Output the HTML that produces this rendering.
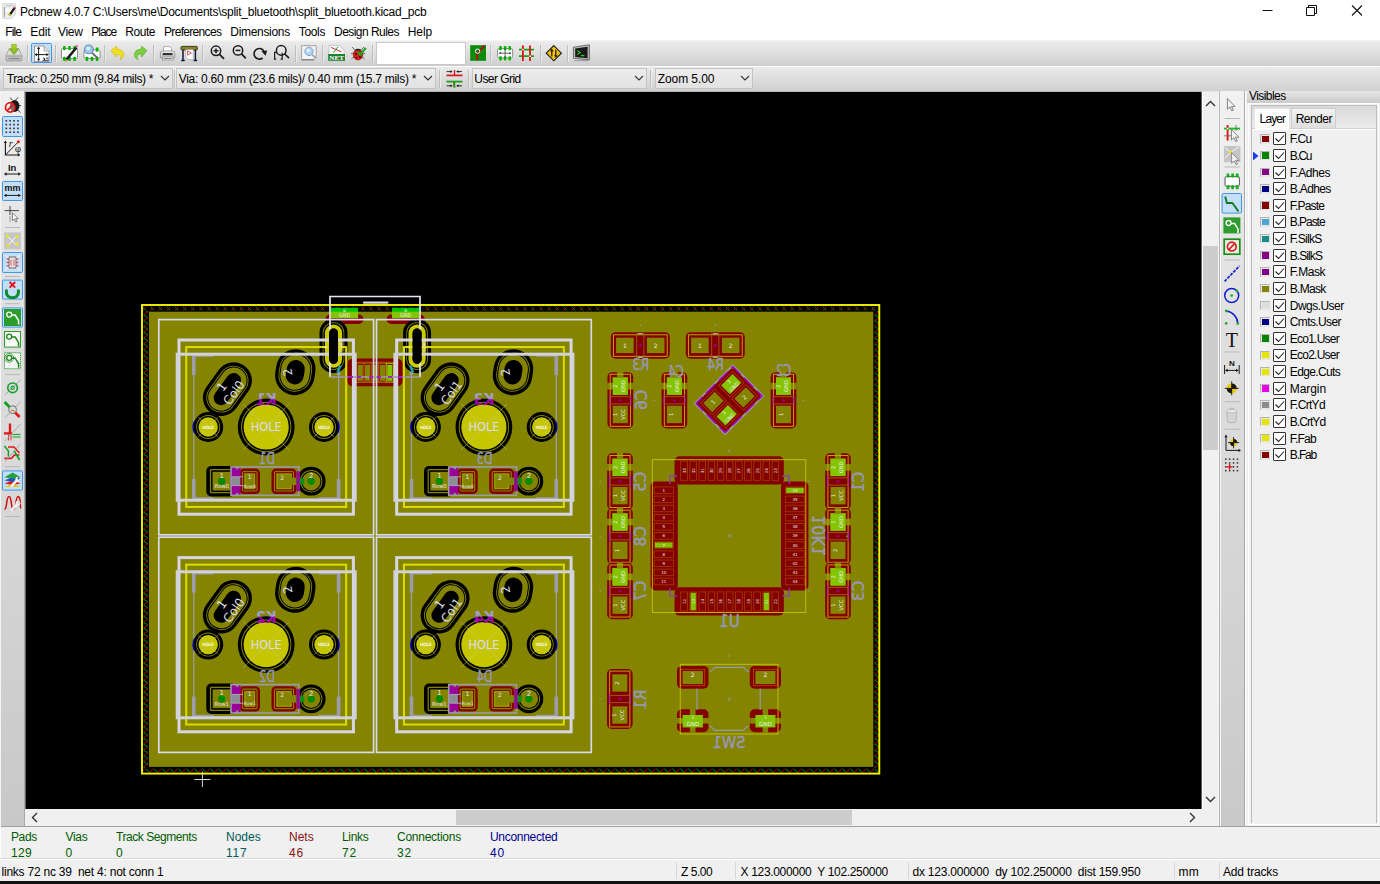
<!DOCTYPE html>
<html><head><meta charset="utf-8"><title>Pcbnew</title>
<style>
html,body{margin:0;padding:0;}
body{width:1380px;height:884px;overflow:hidden;position:relative;background:#f0f0f0;font-family:"Liberation Sans",sans-serif;font-size:12px;color:#000;}
.a{position:absolute;}
.t{position:absolute;white-space:nowrap;line-height:1;}

.tb1{left:0;top:40px;width:1380px;height:26px;background:linear-gradient(#f8f8f8 0,#eaeaea 8%,#e2e2e2 40%,#cecece 100%);}
.tb2{left:0;top:67px;width:1380px;height:24px;background:linear-gradient(#ebebeb,#e2e2e2 30%,#d0d0d0);}
.sep{position:absolute;width:1px;background:#bebebe;box-shadow:1px 0 0 #ececec}
.combo{position:absolute;height:21px;top:68px;border:1px solid #c3c3c3;background:linear-gradient(#ececec,#e2e2e2);box-sizing:border-box;}
.ltb{left:0;top:91px;width:25px;height:735px;background:linear-gradient(#f0f0f0,#e2e2e2 25%,#c8c8c8);border-right:1px solid #a9a9a9;border-left:1px solid #f4f4f4;box-sizing:border-box;width:25px}
.rtb{left:1221px;top:91px;width:23px;height:735px;background:linear-gradient(#f2f2f2,#e2e2e2 25%,#c9c9c9);border-right:1px solid #a9a9a9;}
.sw{position:absolute;width:10.4px;height:9.4px;border:1px solid #b4b4b4;border-right-color:#dcdcdc;border-bottom-color:#e6e6e6;box-sizing:border-box;background:#e8e8e8}
.sw i{position:absolute;left:0.6px;top:0.5px;width:7.4px;height:6.4px;display:block}
.cb{position:absolute;width:13px;height:13px;border:1px solid #333;background:#fff;box-sizing:border-box;border-radius:1px}

</style></head><body>
<div class="a" style="left:0;top:0;width:1380px;height:40px;background:#fff"></div>
<div class="t" id="t1" style="left:20px;top:5.64px;font-size:12px;color:#000;letter-spacing:-0.252px;">Pcbnew 4.0.7 C:\Users\me\Documents\split_bluetooth\split_bluetooth.kicad_pcb</div>
<svg class="a" style="left:0;top:0" width="20" height="22" viewBox="0 0 20 22" fill="none"><path d="M2.6 3.6h13v10.6l-4.4 4.4H2.6z" fill="#ececec" stroke="#d2d2d2" stroke-width="0.8"/><path d="M4.4 7v10" stroke="#9a9a9a" stroke-width="1"/><path d="M5.4 5.6h8.4" stroke="#cfcfcf" stroke-width="1.6"/><path d="M5.6 8.8h6v3h-6z" fill="#fdfdfd"/><path d="M9.4 15.4L14.8 7.6" stroke="#1c1c1c" stroke-width="2.3"/><path d="M14.4 8.2l1-1.4" stroke="#e87080" stroke-width="2.3"/><path d="M9.1 15.8l1.2-1.7" stroke="#e0d820" stroke-width="2.2"/></svg>
<svg class="a" style="left:1250px;top:0" width="130" height="22" viewBox="1250 0 130 22"><path d="M1262.5 10.5h10" stroke="#111" stroke-width="1" fill="none"/><path d="M1306.5 7.5h8v8h-8z M1308.5 7.5v-2h8v8h-2" stroke="#111" stroke-width="1" fill="none"/><path d="M1352 5.5l10 10 M1362 5.5l-10 10" stroke="#111" stroke-width="1.1" fill="none"/></svg>
<div class="t" id="t2" style="left:5.3px;top:26.34px;font-size:12px;color:#000;letter-spacing:-0.915px;">File</div>
<div class="t" id="t3" style="left:30.3px;top:26.34px;font-size:12px;color:#000;letter-spacing:-0.163px;">Edit</div>
<div class="t" id="t4" style="left:58px;top:26.34px;font-size:12px;color:#000;letter-spacing:-0.299px;">View</div>
<div class="t" id="t5" style="left:91.3px;top:26.34px;font-size:12px;color:#000;letter-spacing:-1.033px;">Place</div>
<div class="t" id="t6" style="left:125.3px;top:26.34px;font-size:12px;color:#000;letter-spacing:-0.458px;">Route</div>
<div class="t" id="t7" style="left:164px;top:26.34px;font-size:12px;color:#000;letter-spacing:-0.680px;">Preferences</div>
<div class="t" id="t8" style="left:230.3px;top:26.34px;font-size:12px;color:#000;letter-spacing:-0.311px;">Dimensions</div>
<div class="t" id="t9" style="left:298.7px;top:26.34px;font-size:12px;color:#000;letter-spacing:-0.304px;">Tools</div>
<div class="t" id="t10" style="left:334px;top:26.34px;font-size:12px;color:#000;letter-spacing:-0.534px;">Design Rules</div>
<div class="t" id="t11" style="left:407.7px;top:26.34px;font-size:12px;color:#000;letter-spacing:-0.062px;">Help</div>
<div class="a tb1"></div><div class="a" style="left:0;top:66px;width:1380px;height:1px;background:#fafafa"></div><div class="a tb2"></div>
<div class="a" style="left:0;top:91px;width:1380px;height:1px;background:#e4e4e4"></div>
<div class="sep" style="left:27px;top:45px;height:17px"></div>
<div class="sep" style="left:55px;top:45px;height:17px"></div>
<div class="sep" style="left:104px;top:45px;height:17px"></div>
<div class="sep" style="left:153px;top:45px;height:17px"></div>
<div class="sep" style="left:202px;top:45px;height:17px"></div>
<div class="sep" style="left:295px;top:45px;height:17px"></div>
<div class="sep" style="left:322px;top:45px;height:17px"></div>
<div class="sep" style="left:372px;top:45px;height:17px"></div>
<div class="sep" style="left:490px;top:45px;height:17px"></div>
<div class="sep" style="left:540px;top:45px;height:17px"></div>
<div class="sep" style="left:567px;top:45px;height:17px"></div>
<div class="a" style="left:376px;top:42px;width:90px;height:23px;background:#fff;border:1px solid #c9c9c9;box-sizing:border-box"></div>
<div class="combo" style="left:3px;width:170px"></div>
<div class="t" id="t12" style="left:6.7px;top:73.04px;font-size:12px;color:#000;letter-spacing:-0.366px;">Track: 0.250 mm (9.84 mils) *</div>
<svg class="a" style="left:159.5px;top:74px" width="10" height="8" viewBox="0 0 10 8"><path d="M1 2l4 4 4-4" stroke="#333" stroke-width="1.1" fill="none"/></svg>
<div class="combo" style="left:176px;width:260px"></div>
<div class="t" id="t13" style="left:178.7px;top:73.04px;font-size:12px;color:#000;letter-spacing:-0.279px;">Via: 0.60 mm (23.6 mils)/ 0.40 mm (15.7 mils) *</div>
<svg class="a" style="left:422.5px;top:74px" width="10" height="8" viewBox="0 0 10 8"><path d="M1 2l4 4 4-4" stroke="#333" stroke-width="1.1" fill="none"/></svg>
<div class="combo" style="left:472px;width:175px"></div>
<div class="t" id="t14" style="left:474.3px;top:73.04px;font-size:12px;color:#000;letter-spacing:-0.555px;">User Grid</div>
<svg class="a" style="left:633.5px;top:74px" width="10" height="8" viewBox="0 0 10 8"><path d="M1 2l4 4 4-4" stroke="#333" stroke-width="1.1" fill="none"/></svg>
<div class="combo" style="left:655px;width:98px"></div>
<div class="t" id="t15" style="left:657.7px;top:73.04px;font-size:12px;color:#000;letter-spacing:-0.072px;">Zoom 5.00</div>
<svg class="a" style="left:739.5px;top:74px" width="10" height="8" viewBox="0 0 10 8"><path d="M1 2l4 4 4-4" stroke="#333" stroke-width="1.1" fill="none"/></svg>
<div class="sep" style="left:174px;top:70px;height:18px;background:#c4c4c4"></div>
<div class="sep" style="left:439px;top:70px;height:18px"></div>
<div class="sep" style="left:468px;top:70px;height:18px"></div>
<div class="sep" style="left:650px;top:70px;height:18px"></div>
<div class="a ltb"></div>
<div class="a" style="left:1218px;top:91px;width:3px;height:735px;background:#f6f6f6"></div><div class="a" style="left:1219px;top:91px;width:1px;height:735px;background:#b4b4b4"></div>
<div class="a rtb"></div>
<svg class="a" style="left:0;top:40px" width="600" height="52" viewBox="0 40 600 52" fill="none"><defs><linearGradient id="gy" x1="0" y1="0" x2="0" y2="1"><stop offset="0" stop-color="#b8d820"/><stop offset="1" stop-color="#70b020"/></linearGradient><linearGradient id="gg" x1="0" y1="0" x2="0" y2="1"><stop offset="0" stop-color="#f4f4f4"/><stop offset="1" stop-color="#b4b4b4"/></linearGradient></defs><path d="M6 55.5L9.5 48.5h9L22 55.5V60a1 1 0 0 1-1 1H7a1 1 0 0 1-1-1z" fill="url(#gg)" stroke="#9a9a9a" stroke-width="0.8"/><path d="M6.5 56h15" stroke="#888" stroke-width="0.8"/><path d="M8.5 58.5h11" stroke="#8c8c8c" stroke-width="1.4"/><path d="M11.7 44.5h4.6v4.6h2.8L14 54.6 8.9 49.1h2.8z" fill="url(#gy)" stroke="#7da020" stroke-width="0.6"/><rect x="31.5" y="43.5" width="20" height="19" rx="1" fill="#c4def6" stroke="#3f97e6"/><path d="M34.5 46h9.5l5 5v10.5h-14.5z" fill="#fff" stroke="#8a8a8a" stroke-width="0.8"/><path d="M44 46v5h5" fill="#e4e4e4" stroke="#8a8a8a" stroke-width="0.7"/><path d="M38.6 47.5v13M35.5 54.6h12.5" stroke="#1a1a1a" stroke-width="1"/><path d="M38.6 46.6l-1.6 2.4h3.2zM38.6 61.2l-1.6-2.4h3.2zM34.6 54.6l2.4-1.6v3.2zM48.8 54.6l-2.4-1.6v3.2z" fill="#1a1a1a"/><path d="M42.5 60.3h6.2M43 58.2h1.5v2M46 58.2h2.4" stroke="#1a1a1a" stroke-width="0.9"/><rect x="61.5" y="48.5" width="16" height="10" rx="1.5" fill="#fff" stroke="#777" stroke-width="0.8"/><rect x="63.1" y="46" width="2.6" height="4.2" rx="0.8" fill="#00b400"/><rect x="63.1" y="56.8" width="2.6" height="4.2" rx="0.8" fill="#00b400"/><rect x="68.2" y="46" width="2.6" height="4.2" rx="0.8" fill="#00b400"/><rect x="68.2" y="56.8" width="2.6" height="4.2" rx="0.8" fill="#00b400"/><rect x="73.3" y="46" width="2.6" height="4.2" rx="0.8" fill="#00b400"/><rect x="73.3" y="56.8" width="2.6" height="4.2" rx="0.8" fill="#00b400"/><path d="M66.5 59.5L76.5 47.5" stroke="#1a1a1a" stroke-width="2.6"/><path d="M76 47l1.4-1.6" stroke="#e07090" stroke-width="2.4"/><path d="M65.2 61.2l1.8-0.6-1.2-1.2z" fill="#e8c060" stroke="#c09030" stroke-width="0.8"/><rect x="84" y="50.0" width="16" height="8.5" rx="1.5" fill="#fff" stroke="#777" stroke-width="0.8"/><rect x="85.6" y="47.5" width="2.6" height="4.2" rx="0.8" fill="#00b400"/><rect x="85.6" y="56.8" width="2.6" height="4.2" rx="0.8" fill="#00b400"/><rect x="90.7" y="47.5" width="2.6" height="4.2" rx="0.8" fill="#00b400"/><rect x="90.7" y="56.8" width="2.6" height="4.2" rx="0.8" fill="#00b400"/><rect x="95.8" y="47.5" width="2.6" height="4.2" rx="0.8" fill="#00b400"/><rect x="95.8" y="56.8" width="2.6" height="4.2" rx="0.8" fill="#00b400"/><circle cx="88.8" cy="49.4" r="4.4" fill="#9cc8ee" stroke="#6c8cb0" stroke-width="1.1"/><circle cx="88.2" cy="48.6" r="2" fill="#d4e8fa"/><path d="M92 52.8L97.6 58" stroke="#666" stroke-width="1.8"/><path d="M111 50.6l5.4-4.4v2.9c4.6 0 7.2 2.4 7.2 5.6 0 2.4-1.6 4.2-3.6 5.2 1.1-1.6 1.2-3.2 0.2-4.4-0.8-1-2.2-1.4-3.8-1.4v2.9z" fill="#f2e020" stroke="#c8b400" stroke-width="0.6"/><path d="M147 50.6l-5.4-4.4v2.9c-4.6 0-7.2 2.4-7.2 5.6 0 2.4 1.6 4.2 3.6 5.2-1.1-1.6-1.2-3.2-0.2-4.4 0.8-1 2.2-1.4 3.8-1.4v2.9z" fill="#7cd040" stroke="#58a828" stroke-width="0.6"/><path d="M163.5 52v-5.4h6l2 2V52" fill="#fff" stroke="#9a9a9a" stroke-width="0.8"/><rect x="160.4" y="51" width="14.4" height="7.6" rx="2" fill="url(#gg)" stroke="#8c8c8c" stroke-width="0.8"/><rect x="162.6" y="53" width="10" height="2.2" fill="#333"/><rect x="162.4" y="57" width="10.6" height="3" fill="#f4f4f4" stroke="#8c8c8c" stroke-width="0.7"/><path d="M163.6 58.6h8" stroke="#555" stroke-width="0.8"/><rect x="181" y="46.4" width="16.4" height="3.6" rx="1" fill="#8c8420" stroke="#2a2a18" stroke-width="0.9"/><path d="M183 50v10.4M195.4 50v10.4M181.2 60.6h3.6M193.6 60.6h3.6" stroke="#101840" stroke-width="1.5"/><path d="M185.6 49.4h7.6v10.2h-5l-2.6-2.6z" fill="#fff" stroke="#9a9a9a" stroke-width="0.6"/><path d="M187.6 50.8v4.4l3.8-2.2z" fill="none" stroke="#d03040" stroke-width="0.8"/><circle cx="216" cy="50.8" r="4.7" fill="none" stroke="#1a1a1a" stroke-width="1.5"/><path d="M219.29 54.089999999999996L224 58.8" stroke="#1a1a1a" stroke-width="1.7"/><path d="M213.6 50.8h4.8M216 48.4v4.8" stroke="#1a1a1a" stroke-width="1.5"/><circle cx="238" cy="50.4" r="4.7" fill="none" stroke="#1a1a1a" stroke-width="1.5"/><path d="M241.29 53.69L245.8 58.4" stroke="#1a1a1a" stroke-width="1.7"/><path d="M235.6 50.4h4.8" stroke="#1a1a1a" stroke-width="1.5"/><path d="M264.2 51.6a5.3 5.3 0 1 0 -1.6 6.4" stroke="#1a1a1a" stroke-width="1.6"/><path d="M261.4 51.2l5.8-0.8-1.6 5.4z" fill="#1a1a1a"/><circle cx="281.2" cy="50.4" r="4.8" fill="none" stroke="#1a1a1a" stroke-width="1.5"/><path d="M284.56 53.76L289 58.2" stroke="#1a1a1a" stroke-width="1.7"/><path d="M276.2 52.4h-1.6v6.8h1.6M280.6 59.2h1.6v-6.4" stroke="#1a1a1a" stroke-width="1.2"/><path d="M301.6 45.6h14.6v11.6l-2.6 3h-12z" fill="#f4f4f4" stroke="#9c9c9c" stroke-width="0.9"/><path d="M302 59.6h12" stroke="#7a7a7a" stroke-width="1"/><circle cx="309" cy="51.4" r="4.2" fill="#a8d0f2" stroke="#88a8cc" stroke-width="1"/><circle cx="308.2" cy="50.4" r="2" fill="#e0f0fc"/><path d="M312.2 54.6l4 3.8" stroke="#a0a0a0" stroke-width="1.6"/><path d="M329 45.4h10.4l4.6 4.6v8h-15z" fill="#fbfbfb" stroke="#b4b4b4" stroke-width="0.7"/><path d="M331 47.4l10.4 4.4" stroke="#d03030" stroke-width="1"/><path d="M338 46.8l-4.6 6" stroke="#20a020" stroke-width="1"/><rect x="328.2" y="54" width="16.8" height="6.8" fill="#208030"/><text x="336.6" y="60" font-size="6.6" font-weight="bold" fill="#fff" text-anchor="middle" font-family="Liberation Serif, serif" textLength="14.5" lengthAdjust="spacingAndGlyphs">NET</text><path d="M352 47l3 3M364 47l-3 3M351.4 59l3-2.4M364.6 59l-3-2.4M351 53.6h3M365 53.6h-3" stroke="#555" stroke-width="0.8"/><ellipse cx="358" cy="54.6" rx="4.8" ry="5.4" fill="#e01818" stroke="#801010" stroke-width="0.6"/><path d="M354.6 50.4a3.6 2.6 0 0 1 6.8 0z" fill="#222"/><circle cx="356" cy="54" r="0.9" fill="#200"/><circle cx="360" cy="57" r="0.9" fill="#200"/><circle cx="356.4" cy="57.6" r="0.8" fill="#200"/><path d="M357.4 51.6l2.8 3.2 5.6-7" stroke="#10a820" stroke-width="2.1"/><rect x="470.2" y="45.2" width="15.8" height="15.6" fill="#0a8c0a"/><path d="M477.2 60v-6.4l7.4-8" stroke="#a01818" stroke-width="2.2"/><circle cx="477.6" cy="51.2" r="2.2" stroke="#f0f0f0" stroke-width="1"/><rect x="497.6" y="48.5" width="15" height="9.4" rx="1.5" fill="#fff" stroke="#777" stroke-width="0.8"/><rect x="499.2" y="46" width="2.6" height="4.2" rx="0.8" fill="#00b400"/><rect x="499.2" y="56.199999999999996" width="2.6" height="4.2" rx="0.8" fill="#00b400"/><rect x="503.8" y="46" width="2.6" height="4.2" rx="0.8" fill="#00b400"/><rect x="503.8" y="56.199999999999996" width="2.6" height="4.2" rx="0.8" fill="#00b400"/><rect x="508.4" y="46" width="2.6" height="4.2" rx="0.8" fill="#00b400"/><rect x="508.4" y="56.199999999999996" width="2.6" height="4.2" rx="0.8" fill="#00b400"/><path d="M499.6 53.2h11M505.1 48.6v9.4" stroke="#444" stroke-width="0.8"/><path d="M498.8 53.2l2-1.4v2.8zM511.4 53.2l-2-1.4v2.8z" fill="#444"/><path d="M519 49.6h15M519 56.2h15" stroke="#18a018" stroke-width="1.8"/><path d="M522.9 45.6v15.4M530 45.6v15.4" stroke="#e01010" stroke-width="1.8"/><circle cx="522.9" cy="49.6" r="0.9" fill="#fff"/><circle cx="530" cy="56.2" r="0.9" fill="#fff"/><path d="M553.8 45.6l7.6 7.6-7.6 7.6-7.6-7.6z" fill="#f4c010" stroke="#1a1a1a" stroke-width="1.1"/><path d="M551.8 56.6v-6M555.8 49.8v6" stroke="#1a1a1a" stroke-width="1.2"/><path d="M551.8 48.6l-1.8 2.6h3.6zM555.8 57.8l-1.8-2.6h3.6z" fill="#1a1a1a"/><path d="M573.4 47.2l16-2.4v15l-16-1.6z" fill="#bdbdbd" stroke="#555" stroke-width="0.8"/><path d="M575.2 48.6l12.4-1.8v11.4l-12.4-1.2z" fill="#181818"/><path d="M577.2 50.6l3 2-3 2M581 55.6h3.4" stroke="#20e020" stroke-width="1.1"/><path d="M574.4 60.6h14" stroke="#999" stroke-width="1"/><path d="M446.5 75.4h16" stroke="#d82020" stroke-width="1.8"/><path d="M446.5 81.6h16" stroke="#18a018" stroke-width="1.8"/><path d="M454.5 70v5M454 82v5" stroke="#d82020" stroke-width="1.4"/><path d="M454.4 87.8v-5.6" stroke="#18a018" stroke-width="1.8"/><path d="M446.6 71.6h5M457 71.6h5M446.6 85.8h5M457 85.8h5" stroke="#1a1a1a" stroke-width="0.9"/><path d="M452.6 71.6l-2.2-1.4v2.8zM456.2 71.6l2.2-1.4v2.8zM452.6 85.8l-2.2-1.4v2.8zM456.2 85.8l2.2-1.4v2.8z" fill="#1a1a1a"/></svg>
<svg class="a" style="left:0;top:92px" width="25" height="440" viewBox="0 92 25 440" fill="none"><g transform="translate(0.6 1.6)"><path d="M15 98.4l2.6-2.6M11.6 98.4l-2-2.4M18 104h2.4M17.4 108.6l2.4 2.4" stroke="#222" stroke-width="0.9"/><ellipse cx="14" cy="104.4" rx="4.8" ry="6" fill="#181818"/><circle cx="9.6" cy="105.8" r="4.7" stroke="#e01818" stroke-width="1.7" fill="#f0e0e0" fill-opacity="0.45"/><path d="M6.4 109.2l6.6-6.8" stroke="#e01818" stroke-width="1.7"/></g><rect x="2.5" y="116.5" width="20" height="20" rx="1" fill="#c4def6" stroke="#3f97e6"/><rect x="5.5" y="120.0" width="1.6" height="1.6" fill="#303030"/><rect x="5.5" y="123.8" width="1.6" height="1.6" fill="#303030"/><rect x="5.5" y="127.6" width="1.6" height="1.6" fill="#303030"/><rect x="5.5" y="131.4" width="1.6" height="1.6" fill="#303030"/><rect x="9.4" y="120.0" width="1.6" height="1.6" fill="#303030"/><rect x="9.4" y="123.8" width="1.6" height="1.6" fill="#303030"/><rect x="9.4" y="127.6" width="1.6" height="1.6" fill="#303030"/><rect x="9.4" y="131.4" width="1.6" height="1.6" fill="#303030"/><rect x="13.2" y="120.0" width="1.6" height="1.6" fill="#303030"/><rect x="13.2" y="123.8" width="1.6" height="1.6" fill="#303030"/><rect x="13.2" y="127.6" width="1.6" height="1.6" fill="#303030"/><rect x="13.2" y="131.4" width="1.6" height="1.6" fill="#303030"/><rect x="17.1" y="120.0" width="1.6" height="1.6" fill="#303030"/><rect x="17.1" y="123.8" width="1.6" height="1.6" fill="#303030"/><rect x="17.1" y="127.6" width="1.6" height="1.6" fill="#303030"/><rect x="17.1" y="131.4" width="1.6" height="1.6" fill="#303030"/><path d="M5.4 141.5v13.5h14" stroke="#1a1a1a" stroke-width="1.1"/><path d="M5.4 140.4l-1.6 2.6h3.2zM20.4 155l-2.6-1.6v3.2z" fill="#1a1a1a"/><path d="M5.4 155L17.6 142.6" stroke="#1a1a1a" stroke-width="1"/><circle cx="18.4" cy="141.8" r="1.5" fill="#e01010"/><text x="10.6" y="147" font-size="10" font-style="italic" fill="#111" text-anchor="middle" font-family="Liberation Serif, serif">r</text><text x="18" y="152.4" font-size="8.5" fill="#111" text-anchor="middle" font-family="DejaVu Serif, serif">φ</text><text x="12.2" y="171" font-size="9.5" font-weight="bold" fill="#111" text-anchor="middle" font-family="Liberation Sans, sans-serif">In</text><path d="M5.6 174h13.6" stroke="#1a1a1a" stroke-width="1"/><path d="M3.8 174l2.8-1.7v3.4zM21 174l-2.8-1.7v3.4z" fill="#1a1a1a"/><rect x="2.5" y="181.5" width="20" height="19" rx="1" fill="#c4def6" stroke="#3f97e6"/><text x="12.4" y="190.6" font-size="9.5" font-weight="bold" fill="#111" text-anchor="middle" font-family="Liberation Sans, sans-serif" textLength="16" lengthAdjust="spacingAndGlyphs">mm</text><path d="M5.6 195.4h13.6" stroke="#1a1a1a" stroke-width="1"/><path d="M3.8 195.4l2.8-1.7v3.4zM21 195.4l-2.8-1.7v3.4z" fill="#1a1a1a"/><path d="M10 206v9M4.6 210.6h14.4" stroke="#333" stroke-width="0.9"/><path d="M10 216v6" stroke="#888" stroke-width="0.8"/><path d="M12.4 212.6v8l2-1.6 1.4 3 1.2-0.6-1.4-2.8h2.6z" fill="#fff" stroke="#555" stroke-width="0.7"/><path d="M5 227.5h15M5 276.5h15M5 303.7h15M5 374.6h15M5 466.7h15M5 516.5h15" stroke="#b8b8b8" stroke-width="1"/><rect x="4" y="232.4" width="17" height="17" fill="#c6c6c6"/><path d="M7.4 236l9.6 9.6M16.6 236l-9 10" stroke="#fff" stroke-width="0.9"/><circle cx="7.4" cy="236" r="1.5" fill="#e8e800"/><circle cx="16.8" cy="236.4" r="1.5" fill="#e8e800"/><circle cx="7.8" cy="245.6" r="1.5" fill="#e8e800"/><circle cx="17" cy="244" r="1.5" fill="#e8e800"/><rect x="2.5" y="252.5" width="20" height="20" rx="1" fill="#c4def6" stroke="#3f97e6"/><rect x="9" y="257" width="7" height="11" fill="#f0e0e0" stroke="#555" stroke-width="0.8"/><path d="M6.6 259h2.4M6.6 262.4h2.4M6.6 265.8h2.4M16 259h2.4M16 262.4h2.4M16 265.8h2.4" stroke="#d03030" stroke-width="1"/><path d="M5 255.4l3.6 2M20 255.4l-3.6 2M5 269.8l3.6-2M20 269.8l-3.6-2" stroke="#fff" stroke-width="0.8"/><path d="M11 259.6v6M14 259.6v6" stroke="#c04040" stroke-width="0.8"/><rect x="2.5" y="280.1" width="20" height="19.0" rx="1" fill="#c4def6" stroke="#3f97e6"/><path d="M6.4 289.4v3.4a6 5 0 0 0 12 0v-3.4" stroke="#0c8c2c" stroke-width="3"/><path d="M9.6 282l5.6 5.6M15.2 282l-5.6 5.6" stroke="#e01010" stroke-width="1.8"/><rect x="2.5" y="307.9" width="20" height="19.200000000000045" rx="1" fill="#c4def6" stroke="#3f97e6"/><rect x="4" y="309" width="17" height="17" fill="#2c9c2c"/><circle cx="9.2" cy="314.6" r="2.5" stroke="#fff" stroke-width="1.3" fill="none"/><path d="M11.6 315h3.6l3.4 5.6v4" stroke="#fff" stroke-width="1.5" fill="none"/><rect x="4.5" y="331.5" width="16" height="15.600000000000001" fill="#f8f8f8" stroke="#2c9c2c"/><circle cx="9.2" cy="336.6" r="2.5" stroke="#188818" stroke-width="1.3" fill="none"/><path d="M11.6 337h3.6l3.4 5.6v4" stroke="#188818" stroke-width="1.5" fill="none"/><rect x="4.5" y="352.7" width="16" height="16" fill="#f4f4f4" stroke="#2c9c2c" stroke-dasharray="1.2 0.8"/><circle cx="9.2" cy="357.8" r="2.5" stroke="#188818" stroke-width="1.3" fill="none"/><path d="M11.6 358.2h3.6l3.4 5.6v4" stroke="#188818" stroke-width="1.5" fill="none"/><circle cx="9.2" cy="357.8" r="4.4" stroke="#188818" stroke-width="0.8" fill="none"/><path d="M4.6 395l16-15" stroke="#9a9a9a" stroke-width="0.9"/><circle cx="12.6" cy="387.8" r="4.8" stroke="#18a030" stroke-width="1.7"/><circle cx="12.6" cy="387.8" r="1.7" stroke="#18a030" stroke-width="1.1"/><path d="M4.6 402l5.4 5.4" stroke="#10a020" stroke-width="2.8"/><path d="M14.6 412l5 5" stroke="#e01818" stroke-width="2.8"/><path d="M5 417.6l15.6-16" stroke="#9a9a9a" stroke-width="0.8"/><circle cx="12.6" cy="409.6" r="3.9" fill="#d8d8d8" stroke="#666" stroke-width="0.9"/><path d="M11 410.6h3.4" stroke="#c08020" stroke-width="1.2"/><path d="M10 423.6v10M4 433.4h8" stroke="#e01818" stroke-width="2.4"/><path d="M12.6 434.4h8M12.6 437h8" stroke="#10a020" stroke-width="1"/><path d="M8.6 434.4v6M11 434.4v6" stroke="#e01818" stroke-width="0.9"/><path d="M5 441l15.6-17" stroke="#9a9a9a" stroke-width="0.8"/><path d="M4.4 446l4 5v5.6" stroke="#10a020" stroke-width="1.5"/><path d="M8 447h6l5.4 6" stroke="#e01818" stroke-width="1.5"/><path d="M4.4 458.4h7l3-3.4h5" stroke="#e01818" stroke-width="1.6"/><path d="M14 450.6l5.6 9.4" stroke="#10a020" stroke-width="1.7"/><path d="M5 461.6l15-17" stroke="#9a9a9a" stroke-width="0.8"/><rect x="2.5" y="470.9" width="20" height="19.200000000000045" rx="1" fill="#c4def6" stroke="#3f97e6"/><path d="M4.4 487l8.2-3.4 8.2 3.4z" fill="#e8c800"/><path d="M4.4 483.6l8.2-3.4 8.2 3.4-8.2 1.4z" fill="#d82020"/><path d="M4.4 480.4l8.2-3.4 8.2 3.4-8.2 1.4z" fill="#2050c8"/><path d="M4.4 477.2l8.2-4.6 8.2 4.6-8.2 1.6z" fill="#20a040"/><path d="M11 486.6l6-6.4" stroke="#f4f4f4" stroke-width="2.6"/><circle cx="17.8" cy="479.2" r="2.4" fill="#f4f4f4"/><circle cx="18.6" cy="478.4" r="1.1" fill="#2050c8"/><path d="M4.4 509.4c3 0 1.6-13 4.6-13s1.6 13 4.6 13 1.6-13 4.6-13 1.4 9 2.6 12" stroke="#d01010" stroke-width="1.5"/><path d="M11.4 510.4l6-6.4" stroke="#f4f4f4" stroke-width="2.6"/><circle cx="18" cy="503.2" r="2.4" fill="#f4f4f4"/><circle cx="18.8" cy="502.4" r="1.1" fill="#c8c8c8"/></svg>
<svg class="a" style="left:1221px;top:92px" width="23" height="400" viewBox="1221 92 23 400" fill="none"><path d="M1227.4 98.6v10.6l2.6-2.2 1.8 3.8 1.5-0.7-1.8-3.7h3.4z" fill="#f4f4f4" stroke="#666" stroke-width="0.8"/><path d="M1224.6 118.5h15M1224.6 167h15M1224.6 260h15M1224.6 352h15M1224.6 401.7h15M1224.6 429.3h15" stroke="#b8b8b8" stroke-width="1"/><path d="M1227.6 125v15.6" stroke="#e81010" stroke-width="1.9"/><path d="M1224 128.6h16" stroke="#10c020" stroke-width="1.9"/><path d="M1224 135.8h9M1236 125v6" stroke="#666" stroke-width="0.8"/><circle cx="1227.6" cy="128.6" r="0.9" fill="#fff"/><path d="M1231.4 129.4v10.6l2.6-2.2 1.8 3.8 1.5-0.7-1.8-3.7h3.4z" fill="#f4f4f4" stroke="#666" stroke-width="0.8"/><rect x="1224" y="146" width="16.4" height="16.2" fill="#c4c4c4"/><path d="M1230.4 152.4l-5.6-5M1230.4 152.4l8.6-5.6M1230.4 152.4l-5.4 6" stroke="#fff" stroke-width="0.9"/><circle cx="1230.4" cy="152.2" r="1.4" fill="#e8e800"/><path d="M1231.6 152.6v10.6l2.6-2.2 1.8 3.8 1.5-0.7-1.8-3.7h3.4z" fill="#f0f0f0" stroke="#777" stroke-width="0.8"/><rect x="1225" y="176.6" width="14.4" height="9.6" rx="1.4" fill="#fff" stroke="#444" stroke-width="0.9"/><rect x="1226.6" y="173.6" width="2.8" height="4" rx="0.8" fill="#10b020"/><rect x="1226.6" y="185.2" width="2.8" height="4" rx="0.8" fill="#10b020"/><rect x="1231.2" y="173.6" width="2.8" height="4" rx="0.8" fill="#10b020"/><rect x="1231.2" y="185.2" width="2.8" height="4" rx="0.8" fill="#10b020"/><rect x="1235.8" y="173.6" width="2.8" height="4" rx="0.8" fill="#10b020"/><rect x="1235.8" y="185.2" width="2.8" height="4" rx="0.8" fill="#10b020"/><rect x="1222.1" y="193.5" width="19.40000000000009" height="19.599999999999994" rx="1" fill="#c4def6" stroke="#3f97e6"/><path d="M1225.2 196.6l1.6 6.4h5.6l2.4 3.2 3.6 5.2" stroke="#0c7c24" stroke-width="1.9" stroke-linejoin="round"/><rect x="1223.4" y="217.4" width="17" height="16" fill="#2c9c2c"/><circle cx="1228.6000000000001" cy="223.0" r="2.5" stroke="#fff" stroke-width="1.3" fill="none"/><path d="M1231.0 223.4h3.6l3.4 5.6v4" stroke="#fff" stroke-width="1.5" fill="none"/><rect x="1224.2" y="239.2" width="15.6" height="15" fill="#e4f0e4" stroke="#1c8c1c" stroke-width="1.7"/><rect x="1225.9" y="240.9" width="12.2" height="11.6" fill="none" stroke="#d8ecd8" stroke-width="0.9" stroke-dasharray="1 1"/><circle cx="1231.8" cy="246.6" r="4.4" stroke="#e01818" stroke-width="1.7"/><path d="M1228.8 249.8l6-6.4" stroke="#e01818" stroke-width="1.6"/><path d="M1224.6 281.4l15-15.6" stroke="#1020d8" stroke-width="1.7" stroke-dasharray="3 1.2"/><circle cx="1231.7" cy="295.6" r="7" stroke="#1020d8" stroke-width="1.5"/><circle cx="1231.7" cy="295.6" r="1.4" fill="#20b030"/><circle cx="1236.8" cy="290.8" r="1.4" fill="#20b030"/><path d="M1226.4 311a13 13 0 0 1 11.4 12.6" stroke="#1020d8" stroke-width="1.6"/><circle cx="1226.2" cy="311" r="1.4" fill="#20b030"/><circle cx="1237.8" cy="323.6" r="1.4" fill="#20b030"/><circle cx="1226.2" cy="323.4" r="1.4" fill="#20b030"/><text x="1231.8" y="346.6" font-size="20" fill="#111" text-anchor="middle" font-family="Liberation Serif, serif">T</text><path d="M1224.6 365v9M1239.2 365v9M1226 370.4h12" stroke="#1a1a1a" stroke-width="1"/><path d="M1225 370.4l2.8-1.6v3.2zM1238.8 370.4l-2.8-1.6v3.2z" fill="#1a1a1a"/><text x="1232" y="366.4" font-size="8" font-weight="bold" fill="#111" text-anchor="middle" font-family="Liberation Sans, sans-serif">N</text><circle cx="1231.7" cy="388.4" r="5" fill="#f0c808"/><path d="M1231.7 388.4V383.4A5 5 0 0 1 1236.7 388.4zM1231.7 388.4V393.4A5 5 0 0 1 1226.7 388.4z" fill="#181818"/><path d="M1224.7 388.4h14M1231.7 381.4v14" stroke="#181818" stroke-width="0.9"/><path d="M1226.6 411.4l1 10.4a4.4 1.4 0 0 0 8.4 0l1-10.4z" fill="#d4d4d4" stroke="#a8a8a8" stroke-width="0.7"/><ellipse cx="1231.8" cy="411.2" rx="5.4" ry="1.7" fill="#ececec" stroke="#aaa" stroke-width="0.7"/><path d="M1229.4 409.4a2.4 1.2 0 0 1 4.8 0" stroke="#aaa" stroke-width="0.8"/><path d="M1226 436v14.4h14" stroke="#1a1a1a" stroke-width="1"/><path d="M1226 434.6l-1.6 2.6h3.2zM1241 450.4l-2.6-1.6v3.2z" fill="#1a1a1a"/><circle cx="1233.6" cy="442.6" r="3.6" fill="#f0c808"/><path d="M1233.6 442.6V439.0A3.6 3.6 0 0 1 1237.1999999999998 442.6zM1233.6 442.6V446.20000000000005A3.6 3.6 0 0 1 1230.0 442.6z" fill="#181818"/><path d="M1228.0 442.6h11.2M1233.6 437.0v11.2" stroke="#181818" stroke-width="0.9"/><rect x="1225.0" y="458.4" width="1.5" height="1.5" fill="#303030"/><rect x="1225.0" y="462.2" width="1.5" height="1.5" fill="#303030"/><rect x="1225.0" y="466.1" width="1.5" height="1.5" fill="#303030"/><rect x="1225.0" y="469.9" width="1.5" height="1.5" fill="#303030"/><rect x="1228.9" y="458.4" width="1.5" height="1.5" fill="#303030"/><rect x="1228.9" y="462.2" width="1.5" height="1.5" fill="#303030"/><rect x="1228.9" y="466.1" width="1.5" height="1.5" fill="#303030"/><rect x="1228.9" y="469.9" width="1.5" height="1.5" fill="#303030"/><rect x="1232.8" y="458.4" width="1.5" height="1.5" fill="#303030"/><rect x="1232.8" y="462.2" width="1.5" height="1.5" fill="#303030"/><rect x="1232.8" y="466.1" width="1.5" height="1.5" fill="#303030"/><rect x="1232.8" y="469.9" width="1.5" height="1.5" fill="#303030"/><rect x="1236.7" y="458.4" width="1.5" height="1.5" fill="#303030"/><rect x="1236.7" y="462.2" width="1.5" height="1.5" fill="#303030"/><rect x="1236.7" y="466.1" width="1.5" height="1.5" fill="#303030"/><rect x="1236.7" y="469.9" width="1.5" height="1.5" fill="#303030"/><path d="M1226.6 466.8h6M1229.6 463.8v6" stroke="#e01010" stroke-width="1.3"/></svg>
<div class="a" style="left:1202px;top:92px;width:16px;height:717px;background:#f0f0f0;border-left:1px solid #fff;box-sizing:border-box"></div>
<div class="a" style="left:1203px;top:246px;width:15px;height:204px;background:#cdcdcd"></div>
<div class="a" style="left:26px;top:809px;width:1192px;height:17px;background:#f0f0f0"></div>
<div class="a" style="left:456px;top:810px;width:396px;height:15px;background:#cdcdcd"></div>
<svg class="a" style="left:26px;top:92px" width="1192" height="734" viewBox="26 92 1192 734" fill="none" stroke="#333" stroke-width="1.4"><path d="M1206 106l4.5-4.5 4.5 4.5"/><path d="M1206 797l4.5 4.5 4.5-4.5"/><path d="M37 813l-4.5 4.5 4.5 4.5"/><path d="M1190 813l4.5 4.5-4.5 4.5"/></svg>
<div class="a" style="left:1245px;top:91px;width:134px;height:735px;background:#f0f0f0;border-left:1px solid #fff"></div>
<div class="a" style="left:1247px;top:91px;width:133px;height:12px;background:linear-gradient(#e6e6e6,#cacaca)"></div>
<div class="t" id="t16" style="left:1249px;top:90.34px;font-size:12px;color:#000;letter-spacing:-0.563px;">Visibles</div>
<div class="a" style="left:1248px;top:103px;width:131px;height:722px;border:1px solid #fff;box-sizing:border-box;background:#f0f0f0"></div>
<div class="a" style="left:1251px;top:105px;width:126px;height:718px;border:1px solid #bdbdbd;box-sizing:border-box;background:linear-gradient(#d9d9d9,#ececec 22px,#f0f0f0 23px)"></div>
<div class="a" style="left:1291px;top:108px;width:45px;height:20px;border:1px solid #cfcfcf;border-bottom:none;box-sizing:border-box;background:linear-gradient(#f2f2f2,#dedede)"></div>
<div class="a" style="left:1254px;top:108px;width:36px;height:21px;border:1px solid #e6e6e6;border-bottom:none;box-sizing:border-box;background:#fff"></div>
<div class="a" style="left:1252px;top:128px;width:124px;height:1px;background:#d0d0d0"></div>
<div class="a" style="left:1255px;top:128px;width:34px;height:1px;background:#fff"></div>
<div class="a" style="left:1252px;top:129px;width:124px;height:693px;background:#f0f0f0;border-top:1px solid #fff"></div>
<div class="t" id="t17" style="left:1259.6px;top:112.54px;font-size:12px;color:#000;letter-spacing:-0.883px;">Layer</div>
<div class="t" id="t18" style="left:1295.7px;top:112.54px;font-size:12px;color:#000;letter-spacing:-0.532px;">Render</div>
<div class="sw" style="left:1260px;top:134.3px"><i style="background:#840000"></i></div>
<div class="cb" style="left:1272.6px;top:132.3px"></div>
<svg class="a" style="left:1272.6px;top:132.3px" width="13" height="13" viewBox="0 0 13 13"><path d="M2.5 6.5l3 3 5.5-6" stroke="#222" stroke-width="1.1" fill="none"/></svg>
<div class="t" id="t19" style="left:1289.8px;top:133.24px;font-size:12px;color:#000;letter-spacing:-0.796px;">F.Cu</div>
<div class="sw" style="left:1260px;top:150.9px"><i style="background:#008400"></i></div>
<div class="cb" style="left:1272.6px;top:148.9px"></div>
<svg class="a" style="left:1272.6px;top:148.9px" width="13" height="13" viewBox="0 0 13 13"><path d="M2.5 6.5l3 3 5.5-6" stroke="#222" stroke-width="1.1" fill="none"/></svg>
<div class="t" id="t20" style="left:1289.8px;top:149.87px;font-size:12px;color:#000;letter-spacing:-1.329px;">B.Cu</div>
<div class="sw" style="left:1260px;top:167.6px"><i style="background:#840084"></i></div>
<div class="cb" style="left:1272.6px;top:165.6px"></div>
<svg class="a" style="left:1272.6px;top:165.6px" width="13" height="13" viewBox="0 0 13 13"><path d="M2.5 6.5l3 3 5.5-6" stroke="#222" stroke-width="1.1" fill="none"/></svg>
<div class="t" id="t21" style="left:1289.8px;top:166.50px;font-size:12px;color:#000;letter-spacing:-0.427px;">F.Adhes</div>
<div class="sw" style="left:1260px;top:184.2px"><i style="background:#000084"></i></div>
<div class="cb" style="left:1272.6px;top:182.2px"></div>
<svg class="a" style="left:1272.6px;top:182.2px" width="13" height="13" viewBox="0 0 13 13"><path d="M2.5 6.5l3 3 5.5-6" stroke="#222" stroke-width="1.1" fill="none"/></svg>
<div class="t" id="t22" style="left:1289.8px;top:183.13px;font-size:12px;color:#000;letter-spacing:-0.646px;">B.Adhes</div>
<div class="sw" style="left:1260px;top:200.8px"><i style="background:#840000"></i></div>
<div class="cb" style="left:1272.6px;top:198.8px"></div>
<svg class="a" style="left:1272.6px;top:198.8px" width="13" height="13" viewBox="0 0 13 13"><path d="M2.5 6.5l3 3 5.5-6" stroke="#222" stroke-width="1.1" fill="none"/></svg>
<div class="t" id="t23" style="left:1289.8px;top:199.76px;font-size:12px;color:#000;letter-spacing:-0.805px;">F.Paste</div>
<div class="sw" style="left:1260px;top:217.4px"><i style="background:#4aa6d6"></i></div>
<div class="cb" style="left:1272.6px;top:215.4px"></div>
<svg class="a" style="left:1272.6px;top:215.4px" width="13" height="13" viewBox="0 0 13 13"><path d="M2.5 6.5l3 3 5.5-6" stroke="#222" stroke-width="1.1" fill="none"/></svg>
<div class="t" id="t24" style="left:1289.8px;top:216.39px;font-size:12px;color:#000;letter-spacing:-1.039px;">B.Paste</div>
<div class="sw" style="left:1260px;top:234.1px"><i style="background:#188a8a"></i></div>
<div class="cb" style="left:1272.6px;top:232.1px"></div>
<svg class="a" style="left:1272.6px;top:232.1px" width="13" height="13" viewBox="0 0 13 13"><path d="M2.5 6.5l3 3 5.5-6" stroke="#222" stroke-width="1.1" fill="none"/></svg>
<div class="t" id="t25" style="left:1289.8px;top:233.02px;font-size:12px;color:#000;letter-spacing:-0.715px;">F.SilkS</div>
<div class="sw" style="left:1260px;top:250.7px"><i style="background:#840084"></i></div>
<div class="cb" style="left:1272.6px;top:248.7px"></div>
<svg class="a" style="left:1272.6px;top:248.7px" width="13" height="13" viewBox="0 0 13 13"><path d="M2.5 6.5l3 3 5.5-6" stroke="#222" stroke-width="1.1" fill="none"/></svg>
<div class="t" id="t26" style="left:1289.8px;top:249.65px;font-size:12px;color:#000;letter-spacing:-0.931px;">B.SilkS</div>
<div class="sw" style="left:1260px;top:267.3px"><i style="background:#840084"></i></div>
<div class="cb" style="left:1272.6px;top:265.3px"></div>
<svg class="a" style="left:1272.6px;top:265.3px" width="13" height="13" viewBox="0 0 13 13"><path d="M2.5 6.5l3 3 5.5-6" stroke="#222" stroke-width="1.1" fill="none"/></svg>
<div class="t" id="t27" style="left:1289.8px;top:266.28px;font-size:12px;color:#000;letter-spacing:-0.443px;">F.Mask</div>
<div class="sw" style="left:1260px;top:284.0px"><i style="background:#848400"></i></div>
<div class="cb" style="left:1272.6px;top:282.0px"></div>
<svg class="a" style="left:1272.6px;top:282.0px" width="13" height="13" viewBox="0 0 13 13"><path d="M2.5 6.5l3 3 5.5-6" stroke="#222" stroke-width="1.1" fill="none"/></svg>
<div class="t" id="t28" style="left:1289.8px;top:282.91px;font-size:12px;color:#000;letter-spacing:-0.703px;">B.Mask</div>
<div class="sw" style="left:1260px;top:300.6px"><i style="background:#dedede"></i></div>
<div class="cb" style="left:1272.6px;top:298.6px"></div>
<svg class="a" style="left:1272.6px;top:298.6px" width="13" height="13" viewBox="0 0 13 13"><path d="M2.5 6.5l3 3 5.5-6" stroke="#222" stroke-width="1.1" fill="none"/></svg>
<div class="t" id="t29" style="left:1289.8px;top:299.54px;font-size:12px;color:#000;letter-spacing:-0.536px;">Dwgs.User</div>
<div class="sw" style="left:1260px;top:317.2px"><i style="background:#000084"></i></div>
<div class="cb" style="left:1272.6px;top:315.2px"></div>
<svg class="a" style="left:1272.6px;top:315.2px" width="13" height="13" viewBox="0 0 13 13"><path d="M2.5 6.5l3 3 5.5-6" stroke="#222" stroke-width="1.1" fill="none"/></svg>
<div class="t" id="t30" style="left:1289.8px;top:316.17px;font-size:12px;color:#000;letter-spacing:-0.621px;">Cmts.User</div>
<div class="sw" style="left:1260px;top:333.9px"><i style="background:#008400"></i></div>
<div class="cb" style="left:1272.6px;top:331.9px"></div>
<svg class="a" style="left:1272.6px;top:331.9px" width="13" height="13" viewBox="0 0 13 13"><path d="M2.5 6.5l3 3 5.5-6" stroke="#222" stroke-width="1.1" fill="none"/></svg>
<div class="t" id="t31" style="left:1289.8px;top:332.80px;font-size:12px;color:#000;letter-spacing:-0.766px;">Eco1.User</div>
<div class="sw" style="left:1260px;top:350.5px"><i style="background:#e6e600"></i></div>
<div class="cb" style="left:1272.6px;top:348.5px"></div>
<svg class="a" style="left:1272.6px;top:348.5px" width="13" height="13" viewBox="0 0 13 13"><path d="M2.5 6.5l3 3 5.5-6" stroke="#222" stroke-width="1.1" fill="none"/></svg>
<div class="t" id="t32" style="left:1289.8px;top:349.43px;font-size:12px;color:#000;letter-spacing:-0.766px;">Eco2.User</div>
<div class="sw" style="left:1260px;top:367.1px"><i style="background:#e6e600"></i></div>
<div class="cb" style="left:1272.6px;top:365.1px"></div>
<svg class="a" style="left:1272.6px;top:365.1px" width="13" height="13" viewBox="0 0 13 13"><path d="M2.5 6.5l3 3 5.5-6" stroke="#222" stroke-width="1.1" fill="none"/></svg>
<div class="t" id="t33" style="left:1289.8px;top:366.06px;font-size:12px;color:#000;letter-spacing:-0.631px;">Edge.Cuts</div>
<div class="sw" style="left:1260px;top:383.8px"><i style="background:#e600e6"></i></div>
<div class="cb" style="left:1272.6px;top:381.8px"></div>
<svg class="a" style="left:1272.6px;top:381.8px" width="13" height="13" viewBox="0 0 13 13"><path d="M2.5 6.5l3 3 5.5-6" stroke="#222" stroke-width="1.1" fill="none"/></svg>
<div class="t" id="t34" style="left:1289.8px;top:382.69px;font-size:12px;color:#000;letter-spacing:-0.077px;">Margin</div>
<div class="sw" style="left:1260px;top:400.4px"><i style="background:#8c8c8c"></i></div>
<div class="cb" style="left:1272.6px;top:398.4px"></div>
<svg class="a" style="left:1272.6px;top:398.4px" width="13" height="13" viewBox="0 0 13 13"><path d="M2.5 6.5l3 3 5.5-6" stroke="#222" stroke-width="1.1" fill="none"/></svg>
<div class="t" id="t35" style="left:1289.8px;top:399.32px;font-size:12px;color:#000;letter-spacing:-0.703px;">F.CrtYd</div>
<div class="sw" style="left:1260px;top:417.0px"><i style="background:#e6e600"></i></div>
<div class="cb" style="left:1272.6px;top:415.0px"></div>
<svg class="a" style="left:1272.6px;top:415.0px" width="13" height="13" viewBox="0 0 13 13"><path d="M2.5 6.5l3 3 5.5-6" stroke="#222" stroke-width="1.1" fill="none"/></svg>
<div class="t" id="t36" style="left:1289.8px;top:415.95px;font-size:12px;color:#000;letter-spacing:-0.953px;">B.CrtYd</div>
<div class="sw" style="left:1260px;top:433.6px"><i style="background:#e6e600"></i></div>
<div class="cb" style="left:1272.6px;top:431.6px"></div>
<svg class="a" style="left:1272.6px;top:431.6px" width="13" height="13" viewBox="0 0 13 13"><path d="M2.5 6.5l3 3 5.5-6" stroke="#222" stroke-width="1.1" fill="none"/></svg>
<div class="t" id="t37" style="left:1289.8px;top:432.58px;font-size:12px;color:#000;letter-spacing:-0.804px;">F.Fab</div>
<div class="sw" style="left:1260px;top:450.3px"><i style="background:#840000"></i></div>
<div class="cb" style="left:1272.6px;top:448.3px"></div>
<svg class="a" style="left:1272.6px;top:448.3px" width="13" height="13" viewBox="0 0 13 13"><path d="M2.5 6.5l3 3 5.5-6" stroke="#222" stroke-width="1.1" fill="none"/></svg>
<div class="t" id="t38" style="left:1289.8px;top:449.21px;font-size:12px;color:#000;letter-spacing:-1.129px;">B.Fab</div>
<svg class="a" style="left:1253px;top:151px" width="6" height="10" viewBox="0 0 6 10"><path d="M0 0.5l5.5 4.5-5.5 4.5z" fill="#1a3cf0"/></svg>
<div class="a" style="left:0;top:826px;width:1380px;height:34px;background:#f0f0f0;border-top:1px solid #a0a0a0;box-sizing:border-box"></div>
<div class="a" style="left:0;top:826px;width:1px;height:33px;background:#fff"></div>
<div class="a" style="left:0;top:858px;width:1380px;height:1px;background:#d9d9d9"></div>
<div class="a" style="left:0;top:859px;width:1380px;height:1px;background:#fff"></div>
<div class="t" id="t39" style="left:11px;top:831.04px;font-size:12px;color:#005a00;letter-spacing:-0.386px;">Pads</div>
<div class="t" id="t40" style="left:11px;top:846.84px;font-size:12px;color:#005a00;letter-spacing:0.334px;">129</div>
<div class="t" id="t41" style="left:65.5px;top:831.04px;font-size:12px;color:#005a00;letter-spacing:-0.314px;">Vias</div>
<div class="t" id="t42" style="left:65.5px;top:846.84px;font-size:12px;color:#005a00;letter-spacing:1.013px;">0</div>
<div class="t" id="t43" style="left:116px;top:831.04px;font-size:12px;color:#005a00;letter-spacing:-0.440px;">Track Segments</div>
<div class="t" id="t44" style="left:116px;top:846.84px;font-size:12px;color:#005a00;letter-spacing:1.013px;">0</div>
<div class="t" id="t45" style="left:226px;top:831.04px;font-size:12px;color:#005a5a;letter-spacing:0.003px;">Nodes</div>
<div class="t" id="t46" style="left:226px;top:846.84px;font-size:12px;color:#005a5a;letter-spacing:0.780px;">117</div>
<div class="t" id="t47" style="left:289px;top:831.04px;font-size:12px;color:#8a1010;letter-spacing:0.004px;">Nets</div>
<div class="t" id="t48" style="left:289px;top:846.84px;font-size:12px;color:#8a1010;letter-spacing:0.841px;">46</div>
<div class="t" id="t49" style="left:342px;top:831.04px;font-size:12px;color:#005a00;letter-spacing:-0.329px;">Links</div>
<div class="t" id="t50" style="left:342px;top:846.84px;font-size:12px;color:#005a00;letter-spacing:0.841px;">72</div>
<div class="t" id="t51" style="left:397px;top:831.04px;font-size:12px;color:#005a00;letter-spacing:-0.252px;">Connections</div>
<div class="t" id="t52" style="left:397px;top:846.84px;font-size:12px;color:#005a00;letter-spacing:0.841px;">32</div>
<div class="t" id="t53" style="left:490px;top:831.04px;font-size:12px;color:#000090;letter-spacing:-0.302px;">Unconnected</div>
<div class="t" id="t54" style="left:490px;top:846.84px;font-size:12px;color:#000090;letter-spacing:0.841px;">40</div>
<div class="a" style="left:0;top:860px;width:1380px;height:21px;background:#f0f0f0"></div>
<div class="a" style="left:676px;top:862px;width:1px;height:17px;background:#d7d7d7"></div>
<div class="a" style="left:735px;top:862px;width:1px;height:17px;background:#d7d7d7"></div>
<div class="a" style="left:908px;top:862px;width:1px;height:17px;background:#d7d7d7"></div>
<div class="a" style="left:1174px;top:862px;width:1px;height:17px;background:#d7d7d7"></div>
<div class="a" style="left:1219px;top:862px;width:1px;height:17px;background:#d7d7d7"></div>
<div class="t" id="t55" style="left:1.5px;top:866.34px;font-size:12px;color:#000;letter-spacing:-0.227px;">links 72 nc 39&nbsp; net 4: not conn 1</div>
<div class="t" id="t56" style="left:681px;top:866.34px;font-size:12px;color:#000;letter-spacing:-0.466px;">Z 5.00</div>
<div class="t" id="t57" style="left:740.5px;top:866.34px;font-size:12px;color:#000;letter-spacing:-0.321px;">X 123.000000&nbsp; Y 102.250000</div>
<div class="t" id="t58" style="left:912.5px;top:866.34px;font-size:12px;color:#000;letter-spacing:-0.228px;">dx 123.000000&nbsp; dy 102.250000&nbsp; dist 159.950</div>
<div class="t" id="t59" style="left:1178.5px;top:866.34px;font-size:12px;color:#000;letter-spacing:0.200px;">mm</div>
<div class="t" id="t60" style="left:1223px;top:866.34px;font-size:12px;color:#000;letter-spacing:-0.167px;">Add tracks</div>
<div class="a" style="left:0;top:881px;width:1380px;height:3px;background:#111"></div>
<svg class="a" style="left:25px;top:91px" width="1177" height="718" viewBox="25 91 1177 718" fill="none" font-family="DejaVu Sans, Liberation Sans, sans-serif">
<rect x="25.4" y="91.8" width="1176.2" height="717.4" fill="#000"/>
<defs><pattern id="hh" x="142" y="306" width="8.1" height="6" patternUnits="userSpaceOnUse"><path d="M0.5 0.9L3.9 4.3" stroke="#00b800" stroke-width="0.85"/><path d="M3.9 0.9L0.5 4.3" stroke="#d80000" stroke-width="0.85"/></pattern><pattern id="hb" x="145.6" y="768" width="8.1" height="6" patternUnits="userSpaceOnUse"><path d="M0.2 0.8L4.2 4.8" stroke="#00b800" stroke-width="0.85"/><path d="M3.6 4.8L7.6 0.8" stroke="#d80000" stroke-width="0.85"/></pattern><pattern id="hv" x="143" y="309" width="6" height="5.8" patternUnits="userSpaceOnUse"><path d="M0.4 0L5 2.9" stroke="#00b800" stroke-width="0.85"/><path d="M5 2.9L0.4 5.8" stroke="#d80000" stroke-width="0.85"/></pattern><pattern id="hr" x="874" y="309" width="6" height="5.8" patternUnits="userSpaceOnUse"><path d="M0.4 0L5 2.9" stroke="#00b800" stroke-width="0.85"/><path d="M5 2.9L0.4 5.8" stroke="#d80000" stroke-width="0.85"/></pattern><linearGradient id="kg" x1="0" y1="0" x2="0" y2="1"><stop offset="0.42" stop-color="#a0a0c4"/><stop offset="0.5" stop-color="#a000b0"/></linearGradient></defs><rect x="143" y="306" width="735.5" height="5.5" fill="url(#hh)"/><rect x="143" y="767.5" width="735.5" height="5.3" fill="url(#hb)"/><rect x="143" y="311" width="5.5" height="457" fill="url(#hv)"/><rect x="873.8" y="311" width="5.2" height="457" fill="url(#hr)"/><rect x="149" y="311.7" width="724.3" height="455.2" fill="#848400"/><rect x="142" y="305" width="737.3" height="468.6" fill="none" stroke="#f4f400" stroke-width="1.9"/>
<rect x="193.8" y="355" width="144.8" height="144" fill="none" stroke="#9c9cac" stroke-width="1.3"/><path d="M193.8 375V355H213.8" stroke="#9c9cac" stroke-width="3.6" fill="none"/><path d="M193.8 479V499H213.8" stroke="#9c9cac" stroke-width="3.6" fill="none"/><path d="M338.6 375V355H318.6" stroke="#9c9cac" stroke-width="3.6" fill="none"/><path d="M338.6 479V499H318.6" stroke="#9c9cac" stroke-width="3.6" fill="none"/>
<rect x="411.5" y="355" width="144.8" height="144" fill="none" stroke="#9c9cac" stroke-width="1.3"/><path d="M411.5 375V355H431.5" stroke="#9c9cac" stroke-width="3.6" fill="none"/><path d="M411.5 479V499H431.5" stroke="#9c9cac" stroke-width="3.6" fill="none"/><path d="M556.3 375V355H536.3" stroke="#9c9cac" stroke-width="3.6" fill="none"/><path d="M556.3 479V499H536.3" stroke="#9c9cac" stroke-width="3.6" fill="none"/>
<rect x="193.8" y="572.6" width="144.8" height="144" fill="none" stroke="#9c9cac" stroke-width="1.3"/><path d="M193.8 592.6V572.6H213.8" stroke="#9c9cac" stroke-width="3.6" fill="none"/><path d="M193.8 696.6V716.6H213.8" stroke="#9c9cac" stroke-width="3.6" fill="none"/><path d="M338.6 592.6V572.6H318.6" stroke="#9c9cac" stroke-width="3.6" fill="none"/><path d="M338.6 696.6V716.6H318.6" stroke="#9c9cac" stroke-width="3.6" fill="none"/>
<rect x="411.5" y="572.6" width="144.8" height="144" fill="none" stroke="#9c9cac" stroke-width="1.3"/><path d="M411.5 592.6V572.6H431.5" stroke="#9c9cac" stroke-width="3.6" fill="none"/><path d="M411.5 696.6V716.6H431.5" stroke="#9c9cac" stroke-width="3.6" fill="none"/><path d="M556.3 592.6V572.6H536.3" stroke="#9c9cac" stroke-width="3.6" fill="none"/><path d="M556.3 696.6V716.6H536.3" stroke="#9c9cac" stroke-width="3.6" fill="none"/>
<path d="M221.2 397.7L233.6 380.6" stroke="#000" stroke-width="36.6" stroke-linecap="round"/><path d="M221.2 397.7L233.6 380.6" stroke="#848400" stroke-width="29.8" stroke-linecap="round"/><path d="M221.2 397.7L233.6 380.6" stroke="#000" stroke-width="28" stroke-linecap="round"/><path d="M221.2 397.7L233.6 380.6" stroke="#848400" stroke-width="26" stroke-linecap="round"/><path d="M221.2 397.7L233.6 380.6" stroke="#000" stroke-width="15" stroke-linecap="round"/><path d="M294.8 375.4L295.8 369" stroke="#000" stroke-width="39.5" stroke-linecap="round"/><path d="M294.8 375.4L295.8 369" stroke="#848400" stroke-width="32.7" stroke-linecap="round"/><path d="M294.8 375.4L295.8 369" stroke="#000" stroke-width="30.9" stroke-linecap="round"/><path d="M294.8 375.4L295.8 369" stroke="#848400" stroke-width="28.9" stroke-linecap="round"/><path d="M294.8 375.4L295.8 369" stroke="#000" stroke-width="18" stroke-linecap="round"/><circle cx="266.2" cy="427" r="28.4" fill="#000"/><circle cx="266.2" cy="427" r="25.2" fill="#848400"/><circle cx="266.2" cy="427" r="24.2" fill="#000"/><circle cx="266.2" cy="427" r="22.6" fill="#c6c600"/><circle cx="208.2" cy="427" r="15" fill="#000"/><circle cx="208.2" cy="427" r="12" fill="#848400"/><circle cx="208.2" cy="427" r="11.1" fill="#000"/><circle cx="208.2" cy="427" r="9.7" fill="#c6c600"/><circle cx="324" cy="427" r="15" fill="#000"/><circle cx="324" cy="427" r="12" fill="#848400"/><circle cx="324" cy="427" r="11.1" fill="#000"/><circle cx="324" cy="427" r="9.7" fill="#c6c600"/><g stroke="#c8c8b0" stroke-width="0.8" opacity="0.6"><path d="M243.2 404L289.2 450" stroke="#c8c8b0" stroke-width="0.8"/><path d="M243.2 450L289.2 404" stroke="#c8c8b0" stroke-width="0.8"/><path d="M198.2 417L218.2 437" stroke="#c8c8b0" stroke-width="0.8"/><path d="M198.2 437L218.2 417" stroke="#c8c8b0" stroke-width="0.8"/><path d="M314 417L334 437" stroke="#c8c8b0" stroke-width="0.8"/><path d="M314 437L334 417" stroke="#c8c8b0" stroke-width="0.8"/></g><path d="M194.6 421A14.6 14.6 0 0 0 194.6 433" stroke="#0000a0" stroke-width="1.6" fill="none"/><path d="M337.6 421A14.6 14.6 0 0 1 337.6 433" stroke="#0000a0" stroke-width="1.6" fill="none"/><rect x="206.3" y="466" width="29.6" height="30.4" rx="5" fill="#000"/><rect x="209.9" y="469.1" width="23.2" height="24.2" rx="1.5" fill="#848400"/><rect x="211.1" y="470.3" width="20.8" height="21.8" rx="1" fill="#000"/><rect x="212.6" y="471.8" width="17.8" height="18.8" fill="#848400"/><circle cx="311.2" cy="481.2" r="14.4" fill="#000"/><circle cx="311.2" cy="481.2" r="11.2" fill="#848400"/><circle cx="311.2" cy="481.2" r="10.3" fill="#000"/><circle cx="311.2" cy="481.2" r="9.2" fill="#848400"/><rect x="239.5" y="468.6" width="20.5" height="25.4" rx="4.5" fill="#840000"/><rect x="241.9" y="471" width="15.7" height="20.6" rx="2" fill="#848400"/><rect x="243.6" y="472.7" width="12.3" height="17.2" fill="none" stroke="#840000" stroke-width="1.1"/><rect x="245.1" y="474.2" width="9.3" height="14.2" fill="none" stroke="#98a800" stroke-width="0.8"/><rect x="271.5" y="468.6" width="25" height="25.4" rx="4.5" fill="#840000"/><rect x="273.9" y="471" width="20.2" height="20.6" rx="2" fill="#848400"/><rect x="275.6" y="472.7" width="16.8" height="17.2" fill="none" stroke="#840000" stroke-width="1.1"/><rect x="277.1" y="474.2" width="13.8" height="14.2" fill="none" stroke="#98a800" stroke-width="0.8"/><rect x="286.2" y="477.6" width="11" height="7.4" fill="#848400"/><rect x="296.2" y="478.2" width="8" height="6.2" fill="#109010"/><circle cx="221.7" cy="481.2" r="3.6" fill="#008c00"/><circle cx="311.2" cy="481.2" r="3.6" fill="#008c00"/>
<path d="M438.9 397.7L451.3 380.6" stroke="#000" stroke-width="36.6" stroke-linecap="round"/><path d="M438.9 397.7L451.3 380.6" stroke="#848400" stroke-width="29.8" stroke-linecap="round"/><path d="M438.9 397.7L451.3 380.6" stroke="#000" stroke-width="28" stroke-linecap="round"/><path d="M438.9 397.7L451.3 380.6" stroke="#848400" stroke-width="26" stroke-linecap="round"/><path d="M438.9 397.7L451.3 380.6" stroke="#000" stroke-width="15" stroke-linecap="round"/><path d="M512.5 375.4L513.5 369" stroke="#000" stroke-width="39.5" stroke-linecap="round"/><path d="M512.5 375.4L513.5 369" stroke="#848400" stroke-width="32.7" stroke-linecap="round"/><path d="M512.5 375.4L513.5 369" stroke="#000" stroke-width="30.9" stroke-linecap="round"/><path d="M512.5 375.4L513.5 369" stroke="#848400" stroke-width="28.9" stroke-linecap="round"/><path d="M512.5 375.4L513.5 369" stroke="#000" stroke-width="18" stroke-linecap="round"/><circle cx="483.9" cy="427" r="28.4" fill="#000"/><circle cx="483.9" cy="427" r="25.2" fill="#848400"/><circle cx="483.9" cy="427" r="24.2" fill="#000"/><circle cx="483.9" cy="427" r="22.6" fill="#c6c600"/><circle cx="425.9" cy="427" r="15" fill="#000"/><circle cx="425.9" cy="427" r="12" fill="#848400"/><circle cx="425.9" cy="427" r="11.1" fill="#000"/><circle cx="425.9" cy="427" r="9.7" fill="#c6c600"/><circle cx="541.7" cy="427" r="15" fill="#000"/><circle cx="541.7" cy="427" r="12" fill="#848400"/><circle cx="541.7" cy="427" r="11.1" fill="#000"/><circle cx="541.7" cy="427" r="9.7" fill="#c6c600"/><g stroke="#c8c8b0" stroke-width="0.8" opacity="0.6"><path d="M460.9 404L506.9 450" stroke="#c8c8b0" stroke-width="0.8"/><path d="M460.9 450L506.9 404" stroke="#c8c8b0" stroke-width="0.8"/><path d="M415.9 417L435.9 437" stroke="#c8c8b0" stroke-width="0.8"/><path d="M415.9 437L435.9 417" stroke="#c8c8b0" stroke-width="0.8"/><path d="M531.7 417L551.7 437" stroke="#c8c8b0" stroke-width="0.8"/><path d="M531.7 437L551.7 417" stroke="#c8c8b0" stroke-width="0.8"/></g><path d="M412.3 421A14.6 14.6 0 0 0 412.3 433" stroke="#0000a0" stroke-width="1.6" fill="none"/><path d="M555.3 421A14.6 14.6 0 0 1 555.3 433" stroke="#0000a0" stroke-width="1.6" fill="none"/><rect x="424" y="466" width="29.6" height="30.4" rx="5" fill="#000"/><rect x="427.6" y="469.1" width="23.2" height="24.2" rx="1.5" fill="#848400"/><rect x="428.8" y="470.3" width="20.8" height="21.8" rx="1" fill="#000"/><rect x="430.3" y="471.8" width="17.8" height="18.8" fill="#848400"/><circle cx="528.9" cy="481.2" r="14.4" fill="#000"/><circle cx="528.9" cy="481.2" r="11.2" fill="#848400"/><circle cx="528.9" cy="481.2" r="10.3" fill="#000"/><circle cx="528.9" cy="481.2" r="9.2" fill="#848400"/><rect x="457.2" y="468.6" width="20.5" height="25.4" rx="4.5" fill="#840000"/><rect x="459.6" y="471" width="15.7" height="20.6" rx="2" fill="#848400"/><rect x="461.3" y="472.7" width="12.3" height="17.2" fill="none" stroke="#840000" stroke-width="1.1"/><rect x="462.8" y="474.2" width="9.3" height="14.2" fill="none" stroke="#98a800" stroke-width="0.8"/><rect x="489.2" y="468.6" width="25" height="25.4" rx="4.5" fill="#840000"/><rect x="491.6" y="471" width="20.2" height="20.6" rx="2" fill="#848400"/><rect x="493.3" y="472.7" width="16.8" height="17.2" fill="none" stroke="#840000" stroke-width="1.1"/><rect x="494.8" y="474.2" width="13.8" height="14.2" fill="none" stroke="#98a800" stroke-width="0.8"/><rect x="503.9" y="477.6" width="11" height="7.4" fill="#848400"/><rect x="513.9" y="478.2" width="8" height="6.2" fill="#109010"/><circle cx="439.4" cy="481.2" r="3.6" fill="#008c00"/><circle cx="528.9" cy="481.2" r="3.6" fill="#008c00"/>
<path d="M221.2 615.3L233.6 598.2" stroke="#000" stroke-width="36.6" stroke-linecap="round"/><path d="M221.2 615.3L233.6 598.2" stroke="#848400" stroke-width="29.8" stroke-linecap="round"/><path d="M221.2 615.3L233.6 598.2" stroke="#000" stroke-width="28" stroke-linecap="round"/><path d="M221.2 615.3L233.6 598.2" stroke="#848400" stroke-width="26" stroke-linecap="round"/><path d="M221.2 615.3L233.6 598.2" stroke="#000" stroke-width="15" stroke-linecap="round"/><path d="M294.8 593L295.8 586.6" stroke="#000" stroke-width="39.5" stroke-linecap="round"/><path d="M294.8 593L295.8 586.6" stroke="#848400" stroke-width="32.7" stroke-linecap="round"/><path d="M294.8 593L295.8 586.6" stroke="#000" stroke-width="30.9" stroke-linecap="round"/><path d="M294.8 593L295.8 586.6" stroke="#848400" stroke-width="28.9" stroke-linecap="round"/><path d="M294.8 593L295.8 586.6" stroke="#000" stroke-width="18" stroke-linecap="round"/><circle cx="266.2" cy="644.6" r="28.4" fill="#000"/><circle cx="266.2" cy="644.6" r="25.2" fill="#848400"/><circle cx="266.2" cy="644.6" r="24.2" fill="#000"/><circle cx="266.2" cy="644.6" r="22.6" fill="#c6c600"/><circle cx="208.2" cy="644.6" r="15" fill="#000"/><circle cx="208.2" cy="644.6" r="12" fill="#848400"/><circle cx="208.2" cy="644.6" r="11.1" fill="#000"/><circle cx="208.2" cy="644.6" r="9.7" fill="#c6c600"/><circle cx="324" cy="644.6" r="15" fill="#000"/><circle cx="324" cy="644.6" r="12" fill="#848400"/><circle cx="324" cy="644.6" r="11.1" fill="#000"/><circle cx="324" cy="644.6" r="9.7" fill="#c6c600"/><g stroke="#c8c8b0" stroke-width="0.8" opacity="0.6"><path d="M243.2 621.6L289.2 667.6" stroke="#c8c8b0" stroke-width="0.8"/><path d="M243.2 667.6L289.2 621.6" stroke="#c8c8b0" stroke-width="0.8"/><path d="M198.2 634.6L218.2 654.6" stroke="#c8c8b0" stroke-width="0.8"/><path d="M198.2 654.6L218.2 634.6" stroke="#c8c8b0" stroke-width="0.8"/><path d="M314 634.6L334 654.6" stroke="#c8c8b0" stroke-width="0.8"/><path d="M314 654.6L334 634.6" stroke="#c8c8b0" stroke-width="0.8"/></g><path d="M194.6 638.6A14.6 14.6 0 0 0 194.6 650.6" stroke="#0000a0" stroke-width="1.6" fill="none"/><path d="M337.6 638.6A14.6 14.6 0 0 1 337.6 650.6" stroke="#0000a0" stroke-width="1.6" fill="none"/><rect x="206.3" y="683.6" width="29.6" height="30.4" rx="5" fill="#000"/><rect x="209.9" y="686.7" width="23.2" height="24.2" rx="1.5" fill="#848400"/><rect x="211.1" y="687.9" width="20.8" height="21.8" rx="1" fill="#000"/><rect x="212.6" y="689.4" width="17.8" height="18.8" fill="#848400"/><circle cx="311.2" cy="698.8" r="14.4" fill="#000"/><circle cx="311.2" cy="698.8" r="11.2" fill="#848400"/><circle cx="311.2" cy="698.8" r="10.3" fill="#000"/><circle cx="311.2" cy="698.8" r="9.2" fill="#848400"/><rect x="239.5" y="686.2" width="20.5" height="25.4" rx="4.5" fill="#840000"/><rect x="241.9" y="688.6" width="15.7" height="20.6" rx="2" fill="#848400"/><rect x="243.6" y="690.3" width="12.3" height="17.2" fill="none" stroke="#840000" stroke-width="1.1"/><rect x="245.1" y="691.8" width="9.3" height="14.2" fill="none" stroke="#98a800" stroke-width="0.8"/><rect x="271.5" y="686.2" width="25" height="25.4" rx="4.5" fill="#840000"/><rect x="273.9" y="688.6" width="20.2" height="20.6" rx="2" fill="#848400"/><rect x="275.6" y="690.3" width="16.8" height="17.2" fill="none" stroke="#840000" stroke-width="1.1"/><rect x="277.1" y="691.8" width="13.8" height="14.2" fill="none" stroke="#98a800" stroke-width="0.8"/><rect x="286.2" y="695.2" width="11" height="7.4" fill="#848400"/><rect x="296.2" y="695.8" width="8" height="6.2" fill="#109010"/><circle cx="221.7" cy="698.8" r="3.6" fill="#008c00"/><circle cx="311.2" cy="698.8" r="3.6" fill="#008c00"/>
<path d="M438.9 615.3L451.3 598.2" stroke="#000" stroke-width="36.6" stroke-linecap="round"/><path d="M438.9 615.3L451.3 598.2" stroke="#848400" stroke-width="29.8" stroke-linecap="round"/><path d="M438.9 615.3L451.3 598.2" stroke="#000" stroke-width="28" stroke-linecap="round"/><path d="M438.9 615.3L451.3 598.2" stroke="#848400" stroke-width="26" stroke-linecap="round"/><path d="M438.9 615.3L451.3 598.2" stroke="#000" stroke-width="15" stroke-linecap="round"/><path d="M512.5 593L513.5 586.6" stroke="#000" stroke-width="39.5" stroke-linecap="round"/><path d="M512.5 593L513.5 586.6" stroke="#848400" stroke-width="32.7" stroke-linecap="round"/><path d="M512.5 593L513.5 586.6" stroke="#000" stroke-width="30.9" stroke-linecap="round"/><path d="M512.5 593L513.5 586.6" stroke="#848400" stroke-width="28.9" stroke-linecap="round"/><path d="M512.5 593L513.5 586.6" stroke="#000" stroke-width="18" stroke-linecap="round"/><circle cx="483.9" cy="644.6" r="28.4" fill="#000"/><circle cx="483.9" cy="644.6" r="25.2" fill="#848400"/><circle cx="483.9" cy="644.6" r="24.2" fill="#000"/><circle cx="483.9" cy="644.6" r="22.6" fill="#c6c600"/><circle cx="425.9" cy="644.6" r="15" fill="#000"/><circle cx="425.9" cy="644.6" r="12" fill="#848400"/><circle cx="425.9" cy="644.6" r="11.1" fill="#000"/><circle cx="425.9" cy="644.6" r="9.7" fill="#c6c600"/><circle cx="541.7" cy="644.6" r="15" fill="#000"/><circle cx="541.7" cy="644.6" r="12" fill="#848400"/><circle cx="541.7" cy="644.6" r="11.1" fill="#000"/><circle cx="541.7" cy="644.6" r="9.7" fill="#c6c600"/><g stroke="#c8c8b0" stroke-width="0.8" opacity="0.6"><path d="M460.9 621.6L506.9 667.6" stroke="#c8c8b0" stroke-width="0.8"/><path d="M460.9 667.6L506.9 621.6" stroke="#c8c8b0" stroke-width="0.8"/><path d="M415.9 634.6L435.9 654.6" stroke="#c8c8b0" stroke-width="0.8"/><path d="M415.9 654.6L435.9 634.6" stroke="#c8c8b0" stroke-width="0.8"/><path d="M531.7 634.6L551.7 654.6" stroke="#c8c8b0" stroke-width="0.8"/><path d="M531.7 654.6L551.7 634.6" stroke="#c8c8b0" stroke-width="0.8"/></g><path d="M412.3 638.6A14.6 14.6 0 0 0 412.3 650.6" stroke="#0000a0" stroke-width="1.6" fill="none"/><path d="M555.3 638.6A14.6 14.6 0 0 1 555.3 650.6" stroke="#0000a0" stroke-width="1.6" fill="none"/><rect x="424" y="683.6" width="29.6" height="30.4" rx="5" fill="#000"/><rect x="427.6" y="686.7" width="23.2" height="24.2" rx="1.5" fill="#848400"/><rect x="428.8" y="687.9" width="20.8" height="21.8" rx="1" fill="#000"/><rect x="430.3" y="689.4" width="17.8" height="18.8" fill="#848400"/><circle cx="528.9" cy="698.8" r="14.4" fill="#000"/><circle cx="528.9" cy="698.8" r="11.2" fill="#848400"/><circle cx="528.9" cy="698.8" r="10.3" fill="#000"/><circle cx="528.9" cy="698.8" r="9.2" fill="#848400"/><rect x="457.2" y="686.2" width="20.5" height="25.4" rx="4.5" fill="#840000"/><rect x="459.6" y="688.6" width="15.7" height="20.6" rx="2" fill="#848400"/><rect x="461.3" y="690.3" width="12.3" height="17.2" fill="none" stroke="#840000" stroke-width="1.1"/><rect x="462.8" y="691.8" width="9.3" height="14.2" fill="none" stroke="#98a800" stroke-width="0.8"/><rect x="489.2" y="686.2" width="25" height="25.4" rx="4.5" fill="#840000"/><rect x="491.6" y="688.6" width="20.2" height="20.6" rx="2" fill="#848400"/><rect x="493.3" y="690.3" width="16.8" height="17.2" fill="none" stroke="#840000" stroke-width="1.1"/><rect x="494.8" y="691.8" width="13.8" height="14.2" fill="none" stroke="#98a800" stroke-width="0.8"/><rect x="503.9" y="695.2" width="11" height="7.4" fill="#848400"/><rect x="513.9" y="695.8" width="8" height="6.2" fill="#109010"/><circle cx="439.4" cy="698.8" r="3.6" fill="#008c00"/><circle cx="528.9" cy="698.8" r="3.6" fill="#008c00"/>
<rect x="325.4" y="314.6" width="38.1" height="9.4" rx="4.7" fill="#840000"/><rect x="386.6" y="314.6" width="38.2" height="9.4" rx="4.7" fill="#840000"/><path d="M333.5 333L333.5 359.2" stroke="#000" stroke-width="28" stroke-linecap="round"/><path d="M333.5 333L333.5 359.2" stroke="#848400" stroke-width="21.6" stroke-linecap="round"/><path d="M333.5 333L333.5 359.2" stroke="#000" stroke-width="20" stroke-linecap="round"/><path d="M333.5 333L333.5 359.2" stroke="#cccc00" stroke-width="17.2" stroke-linecap="round"/><path d="M333.5 333L333.5 359.2" stroke="#000" stroke-width="9" stroke-linecap="round"/><path d="M417.1 333L417.1 359.2" stroke="#000" stroke-width="28" stroke-linecap="round"/><path d="M417.1 333L417.1 359.2" stroke="#848400" stroke-width="21.6" stroke-linecap="round"/><path d="M417.1 333L417.1 359.2" stroke="#000" stroke-width="20" stroke-linecap="round"/><path d="M417.1 333L417.1 359.2" stroke="#cccc00" stroke-width="17.2" stroke-linecap="round"/><path d="M417.1 333L417.1 359.2" stroke="#000" stroke-width="9" stroke-linecap="round"/><path d="M340.4 365.5L337.6 372.5" stroke="#20a0b0" stroke-width="2.6"/><path d="M410.2 365.5L413 372.5" stroke="#20a0b0" stroke-width="2.6"/><rect x="330.8" y="307.8" width="27.3" height="4.2" fill="#00c400"/><rect x="330.8" y="311.7" width="27.3" height="6.6" fill="#84c400"/><rect x="392" y="307.8" width="27.3" height="4.2" fill="#00c400"/><rect x="392" y="311.7" width="27.3" height="6.6" fill="#84c400"/><rect x="347.3" y="358.6" width="55.3" height="27.7" rx="5.5" fill="#840000"/><rect x="357.6" y="364.9" width="5.2" height="15.9" fill="#848400"/><rect x="356.6" y="363.4" width="7.2" height="18.6" fill="none" stroke="#b04c00" stroke-width="0.9"/><rect x="365" y="364.9" width="5.2" height="15.9" fill="#848400"/><rect x="364" y="363.4" width="7.2" height="18.6" fill="none" stroke="#b04c00" stroke-width="0.9"/><rect x="372.4" y="364.9" width="5.2" height="15.9" fill="#848400"/><rect x="371.4" y="363.4" width="7.2" height="18.6" fill="none" stroke="#b04c00" stroke-width="0.9"/><rect x="379.8" y="364.9" width="5.2" height="15.9" fill="#848400"/><rect x="378.8" y="363.4" width="7.2" height="18.6" fill="none" stroke="#b04c00" stroke-width="0.9"/><rect x="387.2" y="364.9" width="5.2" height="15.9" fill="#84c400"/><rect x="386.2" y="363.4" width="7.2" height="18.6" fill="none" stroke="#9ccc00" stroke-width="0.9"/><rect x="355.4" y="362.2" width="39" height="20" fill="none" stroke="#a08c00" stroke-width="0.8"/>
<rect x="610.8" y="332.15" width="59" height="26.5" rx="5" fill="#840000"/><rect x="616.1" y="337.7" width="17.6" height="15.4" fill="#848400"/><rect x="646.9" y="337.7" width="17.6" height="15.4" fill="#848400"/><rect x="613.4" y="334.8" width="53.8" height="21.5" fill="none" stroke="#c0b400" stroke-width="0.9"/><path d="M636.7 332.6L636.7 358.2" stroke="#9c6c20" stroke-width="0.8"/><path d="M643.9 332.6L643.9 358.2" stroke="#9c6c20" stroke-width="0.8"/><path d="M638.7 345.4L641.9 345.4" stroke="#a000b0" stroke-width="0.8"/><path d="M640.3 343.8L640.3 347" stroke="#a000b0" stroke-width="0.8"/><rect x="637.8" y="333" width="5" height="1.6" fill="#a8a890"/><rect x="637.8" y="356.4" width="5" height="1.6" fill="#a8a890"/><rect x="685.8" y="332.15" width="59" height="26.5" rx="5" fill="#840000"/><rect x="691.1" y="337.7" width="17.6" height="15.4" fill="#848400"/><rect x="721.9" y="337.7" width="17.6" height="15.4" fill="#848400"/><rect x="688.4" y="334.8" width="53.8" height="21.5" fill="none" stroke="#c0b400" stroke-width="0.9"/><path d="M711.7 332.6L711.7 358.2" stroke="#9c6c20" stroke-width="0.8"/><path d="M718.9 332.6L718.9 358.2" stroke="#9c6c20" stroke-width="0.8"/><path d="M713.7 345.4L716.9 345.4" stroke="#a000b0" stroke-width="0.8"/><path d="M715.3 343.8L715.3 347" stroke="#a000b0" stroke-width="0.8"/><rect x="712.8" y="333" width="5" height="1.6" fill="#a8a890"/><rect x="712.8" y="356.4" width="5" height="1.6" fill="#a8a890"/><rect x="607.45" y="372.15" width="25.7" height="56.3" rx="5" fill="#840000"/><rect x="612.8" y="377.45" width="15" height="17.4" fill="#84c400"/><rect x="607.2" y="382.85" width="26.2" height="6.6" fill="#848400"/><rect x="612.8" y="377.45" width="15" height="17.4" fill="#84c400"/><rect x="617.2" y="371.45" width="6.2" height="6.2" fill="#848400"/><rect x="612.8" y="405.75" width="15" height="17.4" fill="#848400"/><rect x="610.2" y="374.25" width="20.2" height="52.1" fill="none" stroke="#c0b400" stroke-width="0.9"/><path d="M610.7 396.7L629.9 396.7" stroke="#a85c10" stroke-width="0.9"/><path d="M610.7 403.9L629.9 403.9" stroke="#a85c10" stroke-width="0.9"/><path d="M609.9 394.9L609.9 405.7" stroke="#a020b0" stroke-width="1"/><path d="M630.7 394.9L630.7 405.7" stroke="#a020b0" stroke-width="1"/><path d="M618.7 400.3L621.9 400.3" stroke="#a000b0" stroke-width="0.8"/><path d="M620.3 398.7L620.3 401.9" stroke="#a000b0" stroke-width="0.8"/><rect x="661.55" y="372.15" width="25.7" height="56.3" rx="5" fill="#840000"/><rect x="666.9" y="377.45" width="15" height="17.4" fill="#84c400"/><rect x="661.3" y="382.85" width="26.2" height="6.6" fill="#848400"/><rect x="666.9" y="377.45" width="15" height="17.4" fill="#84c400"/><rect x="671.3" y="371.45" width="6.2" height="6.2" fill="#848400"/><rect x="666.9" y="405.75" width="15" height="17.4" fill="#848400"/><rect x="664.3" y="374.25" width="20.2" height="52.1" fill="none" stroke="#c0b400" stroke-width="0.9"/><path d="M664.8 396.7L684 396.7" stroke="#a85c10" stroke-width="0.9"/><path d="M664.8 403.9L684 403.9" stroke="#a85c10" stroke-width="0.9"/><path d="M664 394.9L664 405.7" stroke="#a020b0" stroke-width="1"/><path d="M684.8 394.9L684.8 405.7" stroke="#a020b0" stroke-width="1"/><path d="M672.8 400.3L676 400.3" stroke="#a000b0" stroke-width="0.8"/><path d="M674.4 398.7L674.4 401.9" stroke="#a000b0" stroke-width="0.8"/><rect x="770.65" y="372.15" width="25.7" height="56.3" rx="5" fill="#840000"/><rect x="776" y="377.45" width="15" height="17.4" fill="#84c400"/><rect x="770.4" y="382.85" width="26.2" height="6.6" fill="#848400"/><rect x="776" y="377.45" width="15" height="17.4" fill="#84c400"/><rect x="780.4" y="371.45" width="6.2" height="6.2" fill="#848400"/><rect x="776" y="405.75" width="15" height="17.4" fill="#848400"/><rect x="773.4" y="374.25" width="20.2" height="52.1" fill="none" stroke="#c0b400" stroke-width="0.9"/><path d="M773.9 396.7L793.1 396.7" stroke="#a85c10" stroke-width="0.9"/><path d="M773.9 403.9L793.1 403.9" stroke="#a85c10" stroke-width="0.9"/><path d="M773.1 394.9L773.1 405.7" stroke="#a020b0" stroke-width="1"/><path d="M793.9 394.9L793.9 405.7" stroke="#a020b0" stroke-width="1"/><path d="M781.9 400.3L785.1 400.3" stroke="#a000b0" stroke-width="0.8"/><path d="M783.5 398.7L783.5 401.9" stroke="#a000b0" stroke-width="0.8"/><rect x="607.15" y="453.35" width="25.7" height="56.3" rx="5" fill="#840000"/><rect x="612.5" y="458.65" width="15" height="17.4" fill="#84c400"/><rect x="606.9" y="464.05" width="26.2" height="6.6" fill="#848400"/><rect x="612.5" y="458.65" width="15" height="17.4" fill="#84c400"/><rect x="616.9" y="452.65" width="6.2" height="6.2" fill="#848400"/><rect x="612.5" y="486.95" width="15" height="17.4" fill="#848400"/><rect x="609.9" y="455.45" width="20.2" height="52.1" fill="none" stroke="#c0b400" stroke-width="0.9"/><path d="M610.4 477.9L629.6 477.9" stroke="#a85c10" stroke-width="0.9"/><path d="M610.4 485.1L629.6 485.1" stroke="#a85c10" stroke-width="0.9"/><path d="M609.6 476.1L609.6 486.9" stroke="#a020b0" stroke-width="1"/><path d="M630.4 476.1L630.4 486.9" stroke="#a020b0" stroke-width="1"/><path d="M618.4 481.5L621.6 481.5" stroke="#a000b0" stroke-width="0.8"/><path d="M620 479.9L620 483.1" stroke="#a000b0" stroke-width="0.8"/><rect x="607.15" y="508.05" width="25.7" height="56.3" rx="5" fill="#840000"/><rect x="612.5" y="513.35" width="15" height="17.4" fill="#84c400"/><rect x="606.9" y="518.75" width="26.2" height="6.6" fill="#848400"/><rect x="612.5" y="513.35" width="15" height="17.4" fill="#84c400"/><rect x="616.9" y="507.35" width="6.2" height="6.2" fill="#848400"/><rect x="612.5" y="541.65" width="15" height="17.4" fill="#848400"/><rect x="609.9" y="510.15" width="20.2" height="52.1" fill="none" stroke="#c0b400" stroke-width="0.9"/><path d="M610.4 532.6L629.6 532.6" stroke="#a85c10" stroke-width="0.9"/><path d="M610.4 539.8L629.6 539.8" stroke="#a85c10" stroke-width="0.9"/><path d="M609.6 530.8L609.6 541.6" stroke="#a020b0" stroke-width="1"/><path d="M630.4 530.8L630.4 541.6" stroke="#a020b0" stroke-width="1"/><path d="M618.4 536.2L621.6 536.2" stroke="#a000b0" stroke-width="0.8"/><path d="M620 534.6L620 537.8" stroke="#a000b0" stroke-width="0.8"/><rect x="607.15" y="562.85" width="25.7" height="56.3" rx="5" fill="#840000"/><rect x="612.5" y="568.15" width="15" height="17.4" fill="#84c400"/><rect x="606.9" y="573.55" width="26.2" height="6.6" fill="#848400"/><rect x="612.5" y="568.15" width="15" height="17.4" fill="#84c400"/><rect x="616.9" y="562.15" width="6.2" height="6.2" fill="#848400"/><rect x="612.5" y="596.45" width="15" height="17.4" fill="#848400"/><rect x="609.9" y="564.95" width="20.2" height="52.1" fill="none" stroke="#c0b400" stroke-width="0.9"/><path d="M610.4 587.4L629.6 587.4" stroke="#a85c10" stroke-width="0.9"/><path d="M610.4 594.6L629.6 594.6" stroke="#a85c10" stroke-width="0.9"/><path d="M609.6 585.6L609.6 596.4" stroke="#a020b0" stroke-width="1"/><path d="M630.4 585.6L630.4 596.4" stroke="#a020b0" stroke-width="1"/><path d="M618.4 591L621.6 591" stroke="#a000b0" stroke-width="0.8"/><path d="M620 589.4L620 592.6" stroke="#a000b0" stroke-width="0.8"/><rect x="825.15" y="453.35" width="25.7" height="56.3" rx="5" fill="#840000"/><rect x="830.5" y="458.65" width="15" height="17.4" fill="#84c400"/><rect x="824.9" y="464.05" width="26.2" height="6.6" fill="#848400"/><rect x="830.5" y="458.65" width="15" height="17.4" fill="#84c400"/><rect x="834.9" y="452.65" width="6.2" height="6.2" fill="#848400"/><rect x="830.5" y="486.95" width="15" height="17.4" fill="#848400"/><rect x="827.9" y="455.45" width="20.2" height="52.1" fill="none" stroke="#c0b400" stroke-width="0.9"/><path d="M828.4 477.9L847.6 477.9" stroke="#a85c10" stroke-width="0.9"/><path d="M828.4 485.1L847.6 485.1" stroke="#a85c10" stroke-width="0.9"/><path d="M827.6 476.1L827.6 486.9" stroke="#a020b0" stroke-width="1"/><path d="M848.4 476.1L848.4 486.9" stroke="#a020b0" stroke-width="1"/><path d="M836.4 481.5L839.6 481.5" stroke="#a000b0" stroke-width="0.8"/><path d="M838 479.9L838 483.1" stroke="#a000b0" stroke-width="0.8"/><rect x="825.15" y="508.05" width="25.7" height="56.3" rx="5" fill="#840000"/><rect x="830.5" y="513.35" width="15" height="17.4" fill="#84c400"/><rect x="824.9" y="518.75" width="26.2" height="6.6" fill="#848400"/><rect x="830.5" y="513.35" width="15" height="17.4" fill="#84c400"/><rect x="834.9" y="507.35" width="6.2" height="6.2" fill="#848400"/><rect x="830.5" y="541.65" width="15" height="17.4" fill="#848400"/><rect x="827.9" y="510.15" width="20.2" height="52.1" fill="none" stroke="#c0b400" stroke-width="0.9"/><path d="M828.4 532.6L847.6 532.6" stroke="#a85c10" stroke-width="0.9"/><path d="M828.4 539.8L847.6 539.8" stroke="#a85c10" stroke-width="0.9"/><path d="M827.6 530.8L827.6 541.6" stroke="#a020b0" stroke-width="1"/><path d="M848.4 530.8L848.4 541.6" stroke="#a020b0" stroke-width="1"/><path d="M836.4 536.2L839.6 536.2" stroke="#a000b0" stroke-width="0.8"/><path d="M838 534.6L838 537.8" stroke="#a000b0" stroke-width="0.8"/><rect x="825.15" y="562.85" width="25.7" height="56.3" rx="5" fill="#840000"/><rect x="830.5" y="568.15" width="15" height="17.4" fill="#84c400"/><rect x="824.9" y="573.55" width="26.2" height="6.6" fill="#848400"/><rect x="830.5" y="568.15" width="15" height="17.4" fill="#84c400"/><rect x="834.9" y="562.15" width="6.2" height="6.2" fill="#848400"/><rect x="830.5" y="596.45" width="15" height="17.4" fill="#848400"/><rect x="827.9" y="564.95" width="20.2" height="52.1" fill="none" stroke="#c0b400" stroke-width="0.9"/><path d="M828.4 587.4L847.6 587.4" stroke="#a85c10" stroke-width="0.9"/><path d="M828.4 594.6L847.6 594.6" stroke="#a85c10" stroke-width="0.9"/><path d="M827.6 585.6L827.6 596.4" stroke="#a020b0" stroke-width="1"/><path d="M848.4 585.6L848.4 596.4" stroke="#a020b0" stroke-width="1"/><path d="M836.4 591L839.6 591" stroke="#a000b0" stroke-width="0.8"/><path d="M838 589.4L838 592.6" stroke="#a000b0" stroke-width="0.8"/><rect x="606.95" y="669" width="25.7" height="60" rx="5" fill="#840000"/><rect x="612.3" y="674.3" width="15" height="17.4" fill="#848400"/><rect x="612.3" y="706.3" width="15" height="17.4" fill="#848400"/><rect x="609.7" y="671.1" width="20.2" height="55.8" fill="none" stroke="#c0b400" stroke-width="0.9"/><path d="M610.2 695.4L629.4 695.4" stroke="#a85c10" stroke-width="0.9"/><path d="M610.2 702.6L629.4 702.6" stroke="#a85c10" stroke-width="0.9"/><path d="M609.4 693.6L609.4 704.4" stroke="#a020b0" stroke-width="1"/><path d="M630.2 693.6L630.2 704.4" stroke="#a020b0" stroke-width="1"/><path d="M618.2 699L621.4 699" stroke="#a000b0" stroke-width="0.8"/><path d="M619.8 697.4L619.8 700.6" stroke="#a000b0" stroke-width="0.8"/><rect x="674.6" y="456.2" width="109.2" height="28.4" rx="5" fill="#840000"/><rect x="674.6" y="587.2" width="109.2" height="28.4" rx="5" fill="#840000"/><rect x="650.5" y="481.4" width="27.3" height="109" rx="5" fill="#840000"/><rect x="781" y="481.4" width="27.4" height="109" rx="5" fill="#840000"/><rect x="680.75" y="461.1" width="6.6" height="19.2" fill="none" stroke="#a04000" stroke-width="0.8"/><rect x="680.75" y="591.9" width="6.6" height="19.2" fill="none" stroke="#a04000" stroke-width="0.8"/><rect x="654.2" y="486.95" width="19.2" height="6.6" fill="none" stroke="#a04000" stroke-width="0.8"/><rect x="786.2" y="487.55" width="17.6" height="5.4" fill="#84c400"/><rect x="785.4" y="486.95" width="19.2" height="6.6" fill="none" stroke="#a04000" stroke-width="0.8"/><rect x="689.88" y="461.1" width="6.6" height="19.2" fill="none" stroke="#a04000" stroke-width="0.8"/><rect x="690.48" y="592.7" width="5.4" height="17.6" fill="#84c400"/><rect x="689.88" y="591.9" width="6.6" height="19.2" fill="none" stroke="#a04000" stroke-width="0.8"/><rect x="654.2" y="496.08" width="19.2" height="6.6" fill="none" stroke="#a04000" stroke-width="0.8"/><rect x="785.4" y="496.08" width="19.2" height="6.6" fill="none" stroke="#a04000" stroke-width="0.8"/><rect x="699.01" y="461.1" width="6.6" height="19.2" fill="none" stroke="#a04000" stroke-width="0.8"/><rect x="699.01" y="591.9" width="6.6" height="19.2" fill="none" stroke="#a04000" stroke-width="0.8"/><rect x="654.2" y="505.21" width="19.2" height="6.6" fill="none" stroke="#a04000" stroke-width="0.8"/><rect x="785.4" y="505.21" width="19.2" height="6.6" fill="none" stroke="#a04000" stroke-width="0.8"/><rect x="708.14" y="461.1" width="6.6" height="19.2" fill="none" stroke="#a04000" stroke-width="0.8"/><rect x="708.14" y="591.9" width="6.6" height="19.2" fill="none" stroke="#a04000" stroke-width="0.8"/><rect x="654.2" y="514.34" width="19.2" height="6.6" fill="none" stroke="#a04000" stroke-width="0.8"/><rect x="785.4" y="514.34" width="19.2" height="6.6" fill="none" stroke="#a04000" stroke-width="0.8"/><rect x="717.27" y="461.1" width="6.6" height="19.2" fill="none" stroke="#a04000" stroke-width="0.8"/><rect x="717.27" y="591.9" width="6.6" height="19.2" fill="none" stroke="#a04000" stroke-width="0.8"/><rect x="654.2" y="523.47" width="19.2" height="6.6" fill="none" stroke="#a04000" stroke-width="0.8"/><rect x="785.4" y="523.47" width="19.2" height="6.6" fill="none" stroke="#a04000" stroke-width="0.8"/><rect x="726.4" y="461.1" width="6.6" height="19.2" fill="none" stroke="#a04000" stroke-width="0.8"/><rect x="726.4" y="591.9" width="6.6" height="19.2" fill="none" stroke="#a04000" stroke-width="0.8"/><rect x="654.2" y="532.6" width="19.2" height="6.6" fill="none" stroke="#a04000" stroke-width="0.8"/><rect x="785.4" y="532.6" width="19.2" height="6.6" fill="none" stroke="#a04000" stroke-width="0.8"/><rect x="735.53" y="461.1" width="6.6" height="19.2" fill="none" stroke="#a04000" stroke-width="0.8"/><rect x="735.53" y="591.9" width="6.6" height="19.2" fill="none" stroke="#a04000" stroke-width="0.8"/><rect x="655" y="542.33" width="17.6" height="5.4" fill="#84c400"/><rect x="654.2" y="541.73" width="19.2" height="6.6" fill="none" stroke="#a04000" stroke-width="0.8"/><rect x="785.4" y="541.73" width="19.2" height="6.6" fill="none" stroke="#a04000" stroke-width="0.8"/><rect x="744.66" y="461.1" width="6.6" height="19.2" fill="none" stroke="#a04000" stroke-width="0.8"/><rect x="744.66" y="591.9" width="6.6" height="19.2" fill="none" stroke="#a04000" stroke-width="0.8"/><rect x="654.2" y="550.86" width="19.2" height="6.6" fill="none" stroke="#a04000" stroke-width="0.8"/><rect x="785.4" y="550.86" width="19.2" height="6.6" fill="none" stroke="#a04000" stroke-width="0.8"/><rect x="753.79" y="461.1" width="6.6" height="19.2" fill="none" stroke="#a04000" stroke-width="0.8"/><rect x="753.79" y="591.9" width="6.6" height="19.2" fill="none" stroke="#a04000" stroke-width="0.8"/><rect x="654.2" y="559.99" width="19.2" height="6.6" fill="none" stroke="#a04000" stroke-width="0.8"/><rect x="785.4" y="559.99" width="19.2" height="6.6" fill="none" stroke="#a04000" stroke-width="0.8"/><rect x="762.92" y="461.1" width="6.6" height="19.2" fill="none" stroke="#a04000" stroke-width="0.8"/><rect x="763.52" y="592.7" width="5.4" height="17.6" fill="#84c400"/><rect x="762.92" y="591.9" width="6.6" height="19.2" fill="none" stroke="#a04000" stroke-width="0.8"/><rect x="654.2" y="569.12" width="19.2" height="6.6" fill="none" stroke="#a04000" stroke-width="0.8"/><rect x="785.4" y="569.12" width="19.2" height="6.6" fill="none" stroke="#a04000" stroke-width="0.8"/><rect x="772.05" y="461.1" width="6.6" height="19.2" fill="none" stroke="#a04000" stroke-width="0.8"/><rect x="772.05" y="591.9" width="6.6" height="19.2" fill="none" stroke="#a04000" stroke-width="0.8"/><rect x="654.2" y="578.25" width="19.2" height="6.6" fill="none" stroke="#a04000" stroke-width="0.8"/><rect x="785.4" y="578.25" width="19.2" height="6.6" fill="none" stroke="#a04000" stroke-width="0.8"/><g transform="translate(729 399.7) rotate(-45)"><rect x="-25.75" y="-20.5" width="51.5" height="41" rx="4" fill="#840000"/><rect x="4.5" y="-15.7" width="16.2" height="12.6" fill="#84c400"/><rect x="-20.7" y="3.1" width="16.2" height="12.6" fill="#84c400"/><rect x="-20.7" y="-15.7" width="16.2" height="12.6" fill="#848400"/><rect x="4.5" y="3.1" width="16.2" height="12.6" fill="#848400"/><rect x="-22.6" y="-17.6" width="20" height="16.4" fill="none" stroke="#b04c00" stroke-width="0.8"/><rect x="-22.6" y="1.2" width="20" height="16.4" fill="none" stroke="#b04c00" stroke-width="0.8"/><rect x="2.6" y="-17.6" width="20" height="16.4" fill="none" stroke="#b04c00" stroke-width="0.8"/><rect x="2.6" y="1.2" width="20" height="16.4" fill="none" stroke="#b04c00" stroke-width="0.8"/></g><rect x="677" y="665.9" width="31.5" height="22.8" rx="5" fill="#840000"/><rect x="682.6" y="671" width="20.3" height="13" fill="#848400"/><rect x="680.8" y="669.3" width="23.9" height="16.4" fill="none" stroke="#b04c00" stroke-width="0.8"/><rect x="677" y="709.3" width="31.5" height="22.9" rx="5" fill="#840000"/><rect x="689.95" y="708.8" width="5.6" height="24" fill="#848400"/><rect x="676.25" y="718" width="33" height="5.6" fill="#848400"/><rect x="682.6" y="715" width="20.3" height="12.4" fill="#84c400"/><rect x="749.8" y="665.9" width="31.2" height="22.8" rx="5" fill="#840000"/><rect x="755.4" y="671" width="20" height="13" fill="#848400"/><rect x="753.6" y="669.3" width="23.6" height="16.4" fill="none" stroke="#b04c00" stroke-width="0.8"/><rect x="749.8" y="709.3" width="31.2" height="22.9" rx="5" fill="#840000"/><rect x="762.6" y="708.8" width="5.6" height="24" fill="#848400"/><rect x="748.9" y="718" width="33" height="5.6" fill="#848400"/><rect x="755.4" y="715" width="20" height="12.4" fill="#84c400"/>
<rect x="230.6" y="466.6" width="10" height="29" fill="#9a009a"/><path d="M234.6 466.6l2.6 3.4 2.6-3.4zM234.6 495.6l2.6-3.4 2.6 3.4z" fill="#90907c"/><rect x="231" y="477" width="9.2" height="8.4" fill="#8c8c94"/><rect x="231" y="467" width="67.8" height="28.4" fill="none" stroke="#9c9ca8" stroke-width="1.6"/><path d="M232.2 476.8L243.2 476.8" stroke="#a8a8b0" stroke-width="1"/><path d="M232.2 485.6L243.2 485.6" stroke="#a8a8b0" stroke-width="1"/><rect x="296.6" y="471.2" width="3.2" height="20" fill="#9a009a"/>
<rect x="448.3" y="466.6" width="10" height="29" fill="#9a009a"/><path d="M452.3 466.6l2.6 3.4 2.6-3.4zM452.3 495.6l2.6-3.4 2.6 3.4z" fill="#90907c"/><rect x="448.7" y="477" width="9.2" height="8.4" fill="#8c8c94"/><rect x="448.7" y="467" width="67.8" height="28.4" fill="none" stroke="#9c9ca8" stroke-width="1.6"/><path d="M449.9 476.8L460.9 476.8" stroke="#a8a8b0" stroke-width="1"/><path d="M449.9 485.6L460.9 485.6" stroke="#a8a8b0" stroke-width="1"/><rect x="514.3" y="471.2" width="3.2" height="20" fill="#9a009a"/>
<rect x="230.6" y="684.2" width="10" height="29" fill="#9a009a"/><path d="M234.6 684.2l2.6 3.4 2.6-3.4zM234.6 713.2l2.6-3.4 2.6 3.4z" fill="#90907c"/><rect x="231" y="694.6" width="9.2" height="8.4" fill="#8c8c94"/><rect x="231" y="684.6" width="67.8" height="28.4" fill="none" stroke="#9c9ca8" stroke-width="1.6"/><path d="M232.2 694.4L243.2 694.4" stroke="#a8a8b0" stroke-width="1"/><path d="M232.2 703.2L243.2 703.2" stroke="#a8a8b0" stroke-width="1"/><rect x="296.6" y="688.8" width="3.2" height="20" fill="#9a009a"/>
<rect x="448.3" y="684.2" width="10" height="29" fill="#9a009a"/><path d="M452.3 684.2l2.6 3.4 2.6-3.4zM452.3 713.2l2.6-3.4 2.6 3.4z" fill="#90907c"/><rect x="448.7" y="694.6" width="9.2" height="8.4" fill="#8c8c94"/><rect x="448.7" y="684.6" width="67.8" height="28.4" fill="none" stroke="#9c9ca8" stroke-width="1.6"/><path d="M449.9 694.4L460.9 694.4" stroke="#a8a8b0" stroke-width="1"/><path d="M449.9 703.2L460.9 703.2" stroke="#a8a8b0" stroke-width="1"/><rect x="514.3" y="688.8" width="3.2" height="20" fill="#9a009a"/>
<rect x="186.25" y="347.05" width="159.9" height="159.9" fill="none" stroke="#dcdc00" stroke-width="2"/><rect x="179" y="340" width="174.4" height="174.2" fill="none" stroke="#d6d6e6" stroke-width="3"/><rect x="177.2" y="354.2" width="178" height="146" fill="none" stroke="#d2d2da" stroke-width="3"/><rect x="158.8" y="319.6" width="214.8" height="215.2" fill="none" stroke="#d8d8f0" stroke-width="1.7"/>
<rect x="403.95" y="347.05" width="159.9" height="159.9" fill="none" stroke="#dcdc00" stroke-width="2"/><rect x="396.7" y="340" width="174.4" height="174.2" fill="none" stroke="#d6d6e6" stroke-width="3"/><rect x="394.9" y="354.2" width="178" height="146" fill="none" stroke="#d2d2da" stroke-width="3"/><rect x="376.5" y="319.6" width="214.8" height="215.2" fill="none" stroke="#d8d8f0" stroke-width="1.7"/>
<rect x="186.25" y="564.65" width="159.9" height="159.9" fill="none" stroke="#dcdc00" stroke-width="2"/><rect x="179" y="557.6" width="174.4" height="174.2" fill="none" stroke="#d6d6e6" stroke-width="3"/><rect x="177.2" y="571.8" width="178" height="146" fill="none" stroke="#d2d2da" stroke-width="3"/><rect x="158.8" y="537.2" width="214.8" height="215.2" fill="none" stroke="#d8d8f0" stroke-width="1.7"/>
<rect x="403.95" y="564.65" width="159.9" height="159.9" fill="none" stroke="#dcdc00" stroke-width="2"/><rect x="396.7" y="557.6" width="174.4" height="174.2" fill="none" stroke="#d6d6e6" stroke-width="3"/><rect x="394.9" y="571.8" width="178" height="146" fill="none" stroke="#d2d2da" stroke-width="3"/><rect x="376.5" y="537.2" width="214.8" height="215.2" fill="none" stroke="#d8d8f0" stroke-width="1.7"/>
<path d="M330 377.3V296.5H420V377.3" stroke="#e6e6f4" stroke-width="1.7"/><path d="M330 377L420 377" stroke="#9c9cb4" stroke-width="1.6"/><path d="M348 377L353 377" stroke="#a800c0" stroke-width="1.6"/><path d="M357 377L361 377" stroke="#a800c0" stroke-width="1.6"/><path d="M369 377L373 377" stroke="#a800c0" stroke-width="1.6"/><path d="M377 377L381 377" stroke="#a800c0" stroke-width="1.6"/><path d="M388 377L392 377" stroke="#a800c0" stroke-width="1.6"/><path d="M398 377L402 377" stroke="#a800c0" stroke-width="1.6"/><path d="M333.5 333L333.5 359.2" stroke="#000" stroke-width="9" stroke-linecap="round"/><path d="M417.1 333L417.1 359.2" stroke="#000" stroke-width="9" stroke-linecap="round"/><path d="M364 302.6L387.4 302.6" stroke="#dcdcdc" stroke-width="2.2" stroke-linecap="round"/><text x="344.5" y="311.6" font-size="4.5" fill="#f0f0f0" text-anchor="middle" >6</text><text x="344.5" y="317.4" font-size="5" fill="#f0f0f0" text-anchor="middle" >GND</text><text x="405.7" y="311.6" font-size="4.5" fill="#f0f0f0" text-anchor="middle" >6</text><text x="405.7" y="317.4" font-size="5" fill="#f0f0f0" text-anchor="middle" >GND</text><text transform="translate(342.5 346) rotate(-90)" font-size="5" fill="#f0f0f0" text-anchor="middle" >GND</text><text transform="translate(327.1 347) rotate(-90)" font-size="4.6" fill="#f0f0f0" text-anchor="middle" >6</text><text transform="translate(426.1 346) rotate(-90)" font-size="5" fill="#f0f0f0" text-anchor="middle" >GND</text><text transform="translate(410.7 347) rotate(-90)" font-size="4.6" fill="#f0f0f0" text-anchor="middle" >6</text>
<rect x="652.3" y="459.7" width="153.5" height="152.8" fill="none" stroke="#c8c400" stroke-width="0.9"/><path d="M670 484V476H677.2" stroke="#8c40b0" stroke-width="1.3"/><path d="M670 587.8V595.8H677.2" stroke="#8c40b0" stroke-width="1.3"/><path d="M789.4 484V476H782.2" stroke="#8c40b0" stroke-width="1.3"/><path d="M789.4 587.8V595.8H782.2" stroke="#8c40b0" stroke-width="1.3"/><path d="M727.7 535.9L731.7 535.9" stroke="#9898b4" stroke-width="0.8"/><path d="M729.7 533.9L729.7 537.9" stroke="#9898b4" stroke-width="0.8"/><g transform="translate(729 399.7) rotate(-45)"><rect x="-27" y="-21.6" width="54" height="43.2" fill="none" stroke="#9c9cb4" stroke-width="1.5"/><rect x="-26" y="-20.6" width="52" height="41.2" fill="none" stroke="#a000b4" stroke-width="1.6" stroke-dasharray="13 5" stroke-dashoffset="4"/></g><rect x="680.2" y="664.3" width="97.8" height="69.7" fill="none" stroke="#c8c400" stroke-width="0.9"/><path d="M709.6 672.4L715 667.4H743.3L748.7 672.4M709.6 725.4L715 730.4H743.3L748.7 725.4M697 688.6V710M760.2 688.6V710" stroke="#9898b4" stroke-width="1.1"/><path d="M727.4 699.3L730.6 699.3" stroke="#9898b4" stroke-width="0.8"/><path d="M729 697.7L729 700.9" stroke="#9898b4" stroke-width="0.8"/><circle cx="640.3" cy="325.2" r="0.8" fill="#9898b4"/><circle cx="715.3" cy="325.2" r="0.8" fill="#9898b4"/><circle cx="729" cy="451" r="0.8" fill="#9898b4"/><circle cx="729" cy="656" r="0.8" fill="#9898b4"/><circle cx="600.2" cy="481.5" r="0.8" fill="#9898b4"/><circle cx="600.2" cy="536.2" r="0.8" fill="#9898b4"/><circle cx="600.2" cy="591" r="0.8" fill="#9898b4"/><circle cx="600.2" cy="699" r="0.8" fill="#9898b4"/><circle cx="809" cy="481.5" r="0.8" fill="#9898b4"/><circle cx="847" cy="536.2" r="0.8" fill="#9898b4"/><circle cx="809" cy="591" r="0.8" fill="#9898b4"/><circle cx="803" cy="400.3" r="0.8" fill="#9898b4"/><circle cx="654.5" cy="400.3" r="0.8" fill="#9898b4"/><circle cx="729" cy="450.5" r="0.8" fill="#9898b4"/>
<text transform="translate(266.2 431.4) scale(0.95 1)" font-size="12" fill="#dcdcf0" text-anchor="middle" >HOLE</text><text x="208.2" y="428.6" font-size="4.3" fill="#ffffff" text-anchor="middle" stroke="#fff" stroke-width="0.15">HOLE</text><text x="324" y="428.6" font-size="4.3" fill="#ffffff" text-anchor="middle" stroke="#fff" stroke-width="0.15">HOLE</text><text transform="translate(266.4 405.2) scale(-0.86 1)" font-size="16.5" fill="url(#kg)" text-anchor="middle" font-weight="bold">K1</text><text transform="translate(267 464.4) scale(-0.75 1)" font-size="15" fill="#9898b4" text-anchor="middle" stroke="#9898b4" stroke-width="0.4">D1</text><text transform="translate(225.3 389.3) rotate(-54)" font-size="12.5" fill="#dcdcec" text-anchor="middle" >1</text><text transform="translate(237.3 395.3) rotate(-54) scale(0.96 1)" font-size="12.5" fill="#dcdcec" text-anchor="middle" >Col0</text><text transform="translate(291.8 371.5) rotate(-100)" font-size="12" fill="#dcdcec" text-anchor="middle" >2</text><text x="221.7" y="477.7" font-size="7" fill="#e8e8e8" text-anchor="middle" >1</text><text x="221.7" y="488.2" font-size="5.4" fill="#e8e8e8" text-anchor="middle" >Row0</text><text x="249.7" y="478.7" font-size="6" fill="#e8e8e8" text-anchor="middle" >1</text><text x="249.7" y="487.7" font-size="4.6" fill="#e8e8e8" text-anchor="middle" >Row0</text><text x="282.2" y="479.7" font-size="6" fill="#e8e8e8" text-anchor="middle" >2</text><text x="311.2" y="478.2" font-size="7" fill="#e8e8e8" text-anchor="middle" >2</text>
<text transform="translate(483.9 431.4) scale(0.95 1)" font-size="12" fill="#dcdcf0" text-anchor="middle" >HOLE</text><text x="425.9" y="428.6" font-size="4.3" fill="#ffffff" text-anchor="middle" stroke="#fff" stroke-width="0.15">HOLE</text><text x="541.7" y="428.6" font-size="4.3" fill="#ffffff" text-anchor="middle" stroke="#fff" stroke-width="0.15">HOLE</text><text transform="translate(484.1 405.2) scale(-0.86 1)" font-size="16.5" fill="url(#kg)" text-anchor="middle" font-weight="bold">K3</text><text transform="translate(484.7 464.4) scale(-0.75 1)" font-size="15" fill="#9898b4" text-anchor="middle" stroke="#9898b4" stroke-width="0.4">D3</text><text transform="translate(443 389.3) rotate(-54)" font-size="12.5" fill="#dcdcec" text-anchor="middle" >1</text><text transform="translate(455 395.3) rotate(-54) scale(0.96 1)" font-size="12.5" fill="#dcdcec" text-anchor="middle" >Col1</text><text transform="translate(509.5 371.5) rotate(-100)" font-size="12" fill="#dcdcec" text-anchor="middle" >2</text><text x="439.4" y="477.7" font-size="7" fill="#e8e8e8" text-anchor="middle" >1</text><text x="439.4" y="488.2" font-size="5.4" fill="#e8e8e8" text-anchor="middle" >Row0</text><text x="467.4" y="478.7" font-size="6" fill="#e8e8e8" text-anchor="middle" >1</text><text x="467.4" y="487.7" font-size="4.6" fill="#e8e8e8" text-anchor="middle" >Row0</text><text x="499.9" y="479.7" font-size="6" fill="#e8e8e8" text-anchor="middle" >2</text><text x="528.9" y="478.2" font-size="7" fill="#e8e8e8" text-anchor="middle" >2</text>
<text transform="translate(266.2 649) scale(0.95 1)" font-size="12" fill="#dcdcf0" text-anchor="middle" >HOLE</text><text x="208.2" y="646.2" font-size="4.3" fill="#ffffff" text-anchor="middle" stroke="#fff" stroke-width="0.15">HOLE</text><text x="324" y="646.2" font-size="4.3" fill="#ffffff" text-anchor="middle" stroke="#fff" stroke-width="0.15">HOLE</text><text transform="translate(266.4 622.8) scale(-0.86 1)" font-size="16.5" fill="url(#kg)" text-anchor="middle" font-weight="bold">K2</text><text transform="translate(267 682) scale(-0.75 1)" font-size="15" fill="#9898b4" text-anchor="middle" stroke="#9898b4" stroke-width="0.4">D2</text><text transform="translate(225.3 606.9) rotate(-54)" font-size="12.5" fill="#dcdcec" text-anchor="middle" >1</text><text transform="translate(237.3 612.9) rotate(-54) scale(0.96 1)" font-size="12.5" fill="#dcdcec" text-anchor="middle" >Col0</text><text transform="translate(291.8 589.1) rotate(-100)" font-size="12" fill="#dcdcec" text-anchor="middle" >2</text><text x="221.7" y="695.3" font-size="7" fill="#e8e8e8" text-anchor="middle" >1</text><text x="221.7" y="705.8" font-size="5.4" fill="#e8e8e8" text-anchor="middle" >Row1</text><text x="249.7" y="696.3" font-size="6" fill="#e8e8e8" text-anchor="middle" >1</text><text x="249.7" y="705.3" font-size="4.6" fill="#e8e8e8" text-anchor="middle" >Row1</text><text x="282.2" y="697.3" font-size="6" fill="#e8e8e8" text-anchor="middle" >2</text><text x="311.2" y="695.8" font-size="7" fill="#e8e8e8" text-anchor="middle" >2</text>
<text transform="translate(483.9 649) scale(0.95 1)" font-size="12" fill="#dcdcf0" text-anchor="middle" >HOLE</text><text x="425.9" y="646.2" font-size="4.3" fill="#ffffff" text-anchor="middle" stroke="#fff" stroke-width="0.15">HOLE</text><text x="541.7" y="646.2" font-size="4.3" fill="#ffffff" text-anchor="middle" stroke="#fff" stroke-width="0.15">HOLE</text><text transform="translate(484.1 622.8) scale(-0.86 1)" font-size="16.5" fill="url(#kg)" text-anchor="middle" font-weight="bold">K4</text><text transform="translate(484.7 682) scale(-0.75 1)" font-size="15" fill="#9898b4" text-anchor="middle" stroke="#9898b4" stroke-width="0.4">D4</text><text transform="translate(443 606.9) rotate(-54)" font-size="12.5" fill="#dcdcec" text-anchor="middle" >1</text><text transform="translate(455 612.9) rotate(-54) scale(0.96 1)" font-size="12.5" fill="#dcdcec" text-anchor="middle" >Col1</text><text transform="translate(509.5 589.1) rotate(-100)" font-size="12" fill="#dcdcec" text-anchor="middle" >2</text><text x="439.4" y="695.3" font-size="7" fill="#e8e8e8" text-anchor="middle" >1</text><text x="439.4" y="705.8" font-size="5.4" fill="#e8e8e8" text-anchor="middle" >Row1</text><text x="467.4" y="696.3" font-size="6" fill="#e8e8e8" text-anchor="middle" >1</text><text x="467.4" y="705.3" font-size="4.6" fill="#e8e8e8" text-anchor="middle" >Row1</text><text x="499.9" y="697.3" font-size="6" fill="#e8e8e8" text-anchor="middle" >2</text><text x="528.9" y="695.8" font-size="7" fill="#e8e8e8" text-anchor="middle" >2</text>
<text transform="translate(616.9 386.15) rotate(-90)" font-size="5.2" fill="#f0f0f0" text-anchor="middle" >2</text><text transform="translate(624.9 386.15) rotate(-90)" font-size="5.2" fill="#f0f0f0" text-anchor="middle" >GND</text><text transform="translate(616.9 414.45) rotate(-90)" font-size="5.2" fill="#f0f0f0" text-anchor="middle" >1</text><text transform="translate(624.9 414.45) rotate(-90)" font-size="5.2" fill="#f0f0f0" text-anchor="middle" >VCC</text><text transform="translate(671 386.15) rotate(-90)" font-size="5.2" fill="#f0f0f0" text-anchor="middle" >2</text><text transform="translate(679 386.15) rotate(-90)" font-size="5.2" fill="#f0f0f0" text-anchor="middle" >GND</text><text transform="translate(673.4 414.45) rotate(-90)" font-size="5.2" fill="#f0f0f0" text-anchor="middle" >1</text><text transform="translate(780.1 386.15) rotate(-90)" font-size="5.2" fill="#f0f0f0" text-anchor="middle" >2</text><text transform="translate(788.1 386.15) rotate(-90)" font-size="5.2" fill="#f0f0f0" text-anchor="middle" >GND</text><text transform="translate(782.5 414.45) rotate(-90)" font-size="5.2" fill="#f0f0f0" text-anchor="middle" >1</text><text transform="translate(616.6 467.35) rotate(-90)" font-size="5.2" fill="#f0f0f0" text-anchor="middle" >2</text><text transform="translate(624.6 467.35) rotate(-90)" font-size="5.2" fill="#f0f0f0" text-anchor="middle" >GND</text><text transform="translate(616.6 495.65) rotate(-90)" font-size="5.2" fill="#f0f0f0" text-anchor="middle" >1</text><text transform="translate(624.6 495.65) rotate(-90)" font-size="5.2" fill="#f0f0f0" text-anchor="middle" >VCC</text><text transform="translate(616.6 522.05) rotate(-90)" font-size="5.2" fill="#f0f0f0" text-anchor="middle" >2</text><text transform="translate(624.6 522.05) rotate(-90)" font-size="5.2" fill="#f0f0f0" text-anchor="middle" >GND</text><text transform="translate(619 550.35) rotate(-90)" font-size="5.2" fill="#f0f0f0" text-anchor="middle" >1</text><text transform="translate(616.6 576.85) rotate(-90)" font-size="5.2" fill="#f0f0f0" text-anchor="middle" >2</text><text transform="translate(624.6 576.85) rotate(-90)" font-size="5.2" fill="#f0f0f0" text-anchor="middle" >GND</text><text transform="translate(616.6 605.15) rotate(-90)" font-size="5.2" fill="#f0f0f0" text-anchor="middle" >1</text><text transform="translate(624.6 605.15) rotate(-90)" font-size="5.2" fill="#f0f0f0" text-anchor="middle" >VCC</text><text transform="translate(834.6 467.35) rotate(-90)" font-size="5.2" fill="#f0f0f0" text-anchor="middle" >2</text><text transform="translate(842.6 467.35) rotate(-90)" font-size="5.2" fill="#f0f0f0" text-anchor="middle" >GND</text><text transform="translate(834.6 495.65) rotate(-90)" font-size="5.2" fill="#f0f0f0" text-anchor="middle" >1</text><text transform="translate(842.6 495.65) rotate(-90)" font-size="5.2" fill="#f0f0f0" text-anchor="middle" >VCC</text><text transform="translate(834.6 522.05) rotate(-90)" font-size="5.2" fill="#f0f0f0" text-anchor="middle" >1</text><text transform="translate(842.6 522.05) rotate(-90)" font-size="5.2" fill="#f0f0f0" text-anchor="middle" >GND</text><text transform="translate(837 550.35) rotate(-90)" font-size="5.2" fill="#f0f0f0" text-anchor="middle" >2</text><text transform="translate(834.6 576.85) rotate(-90)" font-size="5.2" fill="#f0f0f0" text-anchor="middle" >2</text><text transform="translate(842.6 576.85) rotate(-90)" font-size="5.2" fill="#f0f0f0" text-anchor="middle" >GND</text><text transform="translate(834.6 605.15) rotate(-90)" font-size="5.2" fill="#f0f0f0" text-anchor="middle" >1</text><text transform="translate(842.6 605.15) rotate(-90)" font-size="5.2" fill="#f0f0f0" text-anchor="middle" >VCC</text><text transform="translate(618.8 683) rotate(-90)" font-size="5.2" fill="#f0f0f0" text-anchor="middle" >2</text><text transform="translate(616.4 715) rotate(-90)" font-size="5.2" fill="#f0f0f0" text-anchor="middle" >1</text><text transform="translate(624.4 715) rotate(-90)" font-size="5.2" fill="#f0f0f0" text-anchor="middle" >VCC</text><text x="624.9" y="347.6" font-size="6" fill="#f0f0f0" text-anchor="middle" >1</text><text x="655.7" y="347.6" font-size="6" fill="#f0f0f0" text-anchor="middle" >2</text><text x="699.9" y="347.6" font-size="6" fill="#f0f0f0" text-anchor="middle" >1</text><text x="730.7" y="347.6" font-size="6" fill="#f0f0f0" text-anchor="middle" >2</text><text transform="translate(730.1 382.9) rotate(-45)" font-size="5" fill="#f0f0f0" text-anchor="middle" >3</text><text transform="translate(735.3 388.1) rotate(-45)" font-size="5" fill="#f0f0f0" text-anchor="middle" >GND</text><text transform="translate(725.5 414.1) rotate(-45)" font-size="5" fill="#f0f0f0" text-anchor="middle" >3</text><text transform="translate(730.7 419.3) rotate(-45)" font-size="5" fill="#f0f0f0" text-anchor="middle" >GND</text><text transform="translate(714.6 403.4) rotate(-45)" font-size="5.6" fill="#f0f0f0" text-anchor="middle" >1</text><text transform="translate(745.8 398.8) rotate(-45)" font-size="5.6" fill="#f0f0f0" text-anchor="middle" >2</text><text transform="translate(685.65 470.7) rotate(-90)" font-size="4" fill="#f0f0f0" text-anchor="middle" >33</text><text transform="translate(685.65 601.5) rotate(-90)" font-size="4" fill="#f0f0f0" text-anchor="middle" >12</text><text x="663.8" y="491.75" font-size="4" fill="#f0f0f0" text-anchor="middle" >1</text><text x="795" y="491.75" font-size="4" fill="#f0f0f0" text-anchor="middle" >34</text><text transform="translate(694.78 470.7) rotate(-90)" font-size="4" fill="#f0f0f0" text-anchor="middle" >32</text><text transform="translate(694.78 601.5) rotate(-90)" font-size="4" fill="#f0f0f0" text-anchor="middle" >13</text><text x="663.8" y="500.88" font-size="4" fill="#f0f0f0" text-anchor="middle" >2</text><text x="795" y="500.88" font-size="4" fill="#f0f0f0" text-anchor="middle" >35</text><text transform="translate(703.91 470.7) rotate(-90)" font-size="4" fill="#f0f0f0" text-anchor="middle" >31</text><text transform="translate(703.91 601.5) rotate(-90)" font-size="4" fill="#f0f0f0" text-anchor="middle" >14</text><text x="663.8" y="510.01" font-size="4" fill="#f0f0f0" text-anchor="middle" >3</text><text x="795" y="510.01" font-size="4" fill="#f0f0f0" text-anchor="middle" >36</text><text transform="translate(713.04 470.7) rotate(-90)" font-size="4" fill="#f0f0f0" text-anchor="middle" >30</text><text transform="translate(713.04 601.5) rotate(-90)" font-size="4" fill="#f0f0f0" text-anchor="middle" >15</text><text x="663.8" y="519.14" font-size="4" fill="#f0f0f0" text-anchor="middle" >4</text><text x="795" y="519.14" font-size="4" fill="#f0f0f0" text-anchor="middle" >37</text><text transform="translate(722.17 470.7) rotate(-90)" font-size="4" fill="#f0f0f0" text-anchor="middle" >29</text><text transform="translate(722.17 601.5) rotate(-90)" font-size="4" fill="#f0f0f0" text-anchor="middle" >16</text><text x="663.8" y="528.27" font-size="4" fill="#f0f0f0" text-anchor="middle" >5</text><text x="795" y="528.27" font-size="4" fill="#f0f0f0" text-anchor="middle" >38</text><text transform="translate(731.3 470.7) rotate(-90)" font-size="4" fill="#f0f0f0" text-anchor="middle" >28</text><text transform="translate(731.3 601.5) rotate(-90)" font-size="4" fill="#f0f0f0" text-anchor="middle" >17</text><text x="663.8" y="537.4" font-size="4" fill="#f0f0f0" text-anchor="middle" >6</text><text x="795" y="537.4" font-size="4" fill="#f0f0f0" text-anchor="middle" >39</text><text transform="translate(740.43 470.7) rotate(-90)" font-size="4" fill="#f0f0f0" text-anchor="middle" >27</text><text transform="translate(740.43 601.5) rotate(-90)" font-size="4" fill="#f0f0f0" text-anchor="middle" >18</text><text x="663.8" y="546.53" font-size="4" fill="#f0f0f0" text-anchor="middle" >7</text><text x="795" y="546.53" font-size="4" fill="#f0f0f0" text-anchor="middle" >40</text><text transform="translate(749.56 470.7) rotate(-90)" font-size="4" fill="#f0f0f0" text-anchor="middle" >26</text><text transform="translate(749.56 601.5) rotate(-90)" font-size="4" fill="#f0f0f0" text-anchor="middle" >19</text><text x="663.8" y="555.66" font-size="4" fill="#f0f0f0" text-anchor="middle" >8</text><text x="795" y="555.66" font-size="4" fill="#f0f0f0" text-anchor="middle" >41</text><text transform="translate(758.69 470.7) rotate(-90)" font-size="4" fill="#f0f0f0" text-anchor="middle" >25</text><text transform="translate(758.69 601.5) rotate(-90)" font-size="4" fill="#f0f0f0" text-anchor="middle" >20</text><text x="663.8" y="564.79" font-size="4" fill="#f0f0f0" text-anchor="middle" >9</text><text x="795" y="564.79" font-size="4" fill="#f0f0f0" text-anchor="middle" >42</text><text transform="translate(767.82 470.7) rotate(-90)" font-size="4" fill="#f0f0f0" text-anchor="middle" >24</text><text transform="translate(767.82 601.5) rotate(-90)" font-size="4" fill="#f0f0f0" text-anchor="middle" >21</text><text x="663.8" y="573.92" font-size="4" fill="#f0f0f0" text-anchor="middle" >10</text><text x="795" y="573.92" font-size="4" fill="#f0f0f0" text-anchor="middle" >43</text><text transform="translate(776.95 470.7) rotate(-90)" font-size="4" fill="#f0f0f0" text-anchor="middle" >23</text><text transform="translate(776.95 601.5) rotate(-90)" font-size="4" fill="#f0f0f0" text-anchor="middle" >22</text><text x="663.8" y="583.05" font-size="4" fill="#f0f0f0" text-anchor="middle" >11</text><text x="795" y="583.05" font-size="4" fill="#f0f0f0" text-anchor="middle" >44</text><text x="692.7" y="677" font-size="6" fill="#f0f0f0" text-anchor="middle" >2</text><text x="765.4" y="677" font-size="6" fill="#f0f0f0" text-anchor="middle" >2</text><text x="692.9" y="719" font-size="4.6" fill="#f0f0f0" text-anchor="middle" >1</text><text x="692.9" y="726" font-size="5.6" fill="#f0f0f0" text-anchor="middle" >GND</text><text x="765.4" y="719" font-size="4.6" fill="#f0f0f0" text-anchor="middle" >1</text><text x="765.4" y="726" font-size="5.6" fill="#f0f0f0" text-anchor="middle" >GND</text><text transform="translate(640.8 370.2) scale(-0.78 1)" font-size="16.5" fill="#9898b4" text-anchor="middle" stroke="#9898b4" stroke-width="0.45">R3</text><text transform="translate(715.5 370.2) scale(-0.78 1)" font-size="16.5" fill="#9898b4" text-anchor="middle" stroke="#9898b4" stroke-width="0.45">R4</text><text transform="translate(676 377.2) scale(-0.78 1)" font-size="15" fill="#9898b4" text-anchor="middle" stroke="#9898b4" stroke-width="0.45">C4</text><text transform="translate(783.5 375.6) scale(-0.78 1)" font-size="15" fill="#9898b4" text-anchor="middle" stroke="#9898b4" stroke-width="0.45">C2</text><text transform="translate(646.6 399.8) rotate(-90) scale(-0.92 1)" font-size="16.5" fill="#9898b4" text-anchor="middle" stroke="#9898b4" stroke-width="0.45">C6</text><text transform="translate(646.2 481.8) rotate(-90) scale(-0.92 1)" font-size="16.5" fill="#9898b4" text-anchor="middle" stroke="#9898b4" stroke-width="0.45">C5</text><text transform="translate(646.2 536.3) rotate(-90) scale(-0.92 1)" font-size="16.5" fill="#9898b4" text-anchor="middle" stroke="#9898b4" stroke-width="0.45">C8</text><text transform="translate(646.2 591) rotate(-90) scale(-0.92 1)" font-size="16.5" fill="#9898b4" text-anchor="middle" stroke="#9898b4" stroke-width="0.45">C7</text><text transform="translate(863.6 481.8) rotate(-90) scale(-0.92 1)" font-size="16.5" fill="#9898b4" text-anchor="middle" stroke="#9898b4" stroke-width="0.45">C1</text><text transform="translate(863.6 591) rotate(-90) scale(-0.92 1)" font-size="16.5" fill="#9898b4" text-anchor="middle" stroke="#9898b4" stroke-width="0.45">C3</text><text transform="translate(825.2 535.6) rotate(-90) scale(-0.94 1)" font-size="17" fill="#9898b4" text-anchor="middle" stroke="#9898b4" stroke-width="0.45">10K1</text><text transform="translate(729.4 627) scale(-0.86 1)" font-size="17.5" fill="#9898b4" text-anchor="middle" stroke="#9898b4" stroke-width="0.45">U1</text><text transform="translate(646.4 699.5) rotate(-90) scale(-0.92 1)" font-size="16.5" fill="#9898b4" text-anchor="middle" stroke="#9898b4" stroke-width="0.45">R1</text><text transform="translate(729.1 748) scale(-0.94 1)" font-size="15.5" fill="#9898b4" text-anchor="middle" stroke="#9898b4" stroke-width="0.45">SW1</text>
<path d="M194.4 779.5L210.4 779.5" stroke="#d8d8d8" stroke-width="1"/><path d="M202.4 771.5L202.4 787" stroke="#d8d8d8" stroke-width="1"/>
</svg>
</body></html>
